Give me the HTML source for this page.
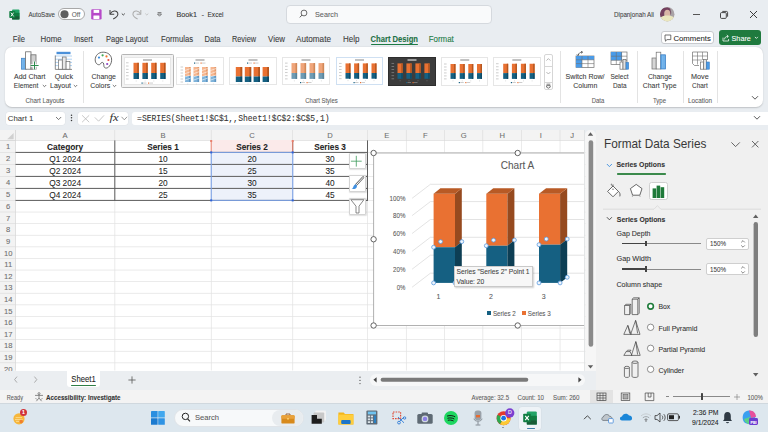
<!DOCTYPE html>
<html><head><meta charset="utf-8"><style>
html,body{margin:0;padding:0;}
body{width:768px;height:432px;overflow:hidden;position:relative;background:#E9EDF1;font-family:'Liberation Sans',sans-serif;}
</style></head><body>
<div style="position:absolute;left:5.00px;top:47.00px;width:758.00px;height:59.50px;background:#FFFFFF;border-radius:7px;box-shadow:0 0.5px 1.5px rgba(0,0,0,0.18);"></div>
<div style="position:absolute;left:5.50px;top:112.00px;width:59.50px;height:12.50px;background:#FFFFFF;border-radius:3px;box-shadow:0 0 0 0.5px #E0E3E8;"></div>
<div style="position:absolute;left:78.00px;top:112.00px;width:50.00px;height:12.50px;background:#FFFFFF;border-radius:3px;box-shadow:0 0 0 0.5px #E0E3E8;"></div>
<div style="position:absolute;left:131.60px;top:112.00px;width:640.00px;height:12.80px;background:#FFFFFF;border-radius:3px;"></div>
<div style="position:absolute;left:0.00px;top:130.00px;width:584.30px;height:240.50px;background:#FFFFFF;border-radius:0px;"></div>
<div style="position:absolute;left:584.80px;top:129.50px;width:11.40px;height:241.00px;background:#F6F6F6;border-radius:0px;border-radius:5px 5px 0 0;"></div>
<div style="position:absolute;left:596.20px;top:130.00px;width:171.80px;height:260.00px;background:#F0F0F0;border-radius:0px;"></div>
<div style="position:absolute;left:0.00px;top:370.50px;width:596.00px;height:19.50px;background:#EBEEF1;border-radius:0px;"></div>
<div style="position:absolute;left:0.00px;top:390.00px;width:768.00px;height:13.00px;background:#F3F3F3;border-radius:0px;"></div>
<div style="position:absolute;left:0.00px;top:403.00px;width:768.00px;height:29.00px;background:#DDE7EE;border-radius:0px;"></div>
<svg style="position:absolute;left:9px;top:9px;overflow:visible;" width="11" height="11" viewBox="0 0 11 11">
<rect x="3" y="0.5" width="7.5" height="10" rx="1" fill="#21A366"/>
<rect x="3" y="3.8" width="7.5" height="3.3" fill="#107C41"/>
<rect x="3" y="7.1" width="7.5" height="3.4" fill="#185C37"/>
<rect x="0.3" y="2" width="6" height="7" rx="0.8" fill="#107C41"/>
<path d="M1.9 3.6 L4.6 7.4 M4.6 3.6 L1.9 7.4" stroke="#fff" stroke-width="0.9"/>
</svg>
<svg style="position:absolute;left:0;top:0" width="768" height="432"><text x="28.50" y="17.05" font-family="Liberation Sans" font-size="7.5" fill="#424242" font-weight="400" text-anchor="start" textLength="26.50" lengthAdjust="spacingAndGlyphs" stroke="#424242" stroke-width="0.08" style="white-space:pre;">AutoSave</text></svg>
<div style="position:absolute;left:58.20px;top:8.10px;width:26.50px;height:12.30px;background:#FFFFFF;border:0.8px solid #A8A8A8;box-sizing:border-box;border-radius:6.2px;"></div>
<svg style="position:absolute;left:58px;top:8px;overflow:visible;" width="26" height="12" viewBox="0 0 26 12"><circle cx="6.5" cy="6.2" r="4.05" fill="#5F5F5F"/></svg>
<svg style="position:absolute;left:0;top:0" width="768" height="432"><text x="71.80" y="16.88" font-family="Liberation Sans" font-size="7" fill="#5F5F5F" font-weight="400" text-anchor="start" textLength="8.50" lengthAdjust="spacingAndGlyphs" stroke="#5F5F5F" stroke-width="0.08" style="white-space:pre;">Off</text></svg>
<svg style="position:absolute;left:91px;top:8.8px;overflow:visible;" width="11" height="11" viewBox="0 0 11 11">
<rect x="0.2" y="0.2" width="10.4" height="10.4" rx="1.3" fill="#B749C9"/>
<rect x="2.6" y="0.9" width="5.6" height="3" fill="#fff"/>
<rect x="2.4" y="6.4" width="6" height="3.6" rx="0.4" fill="#fff"/>
</svg>
<svg style="position:absolute;left:108px;top:8px;overflow:visible;" width="20" height="12" viewBox="0 0 20 12">
<path d="M2 2 V6.2 H6.2" fill="none" stroke="#424242" stroke-width="1.05" stroke-linejoin="round"/>
<path d="M2.2 6 C4 2.6 8.6 2 9.7 5 C10.4 7.2 8.2 9.6 5.2 10.9" fill="none" stroke="#424242" stroke-width="1.05"/>
<path d="M13.8 5.6 L15.3 7 L16.8 5.6" fill="none" stroke="#424242" stroke-width="0.95"/>
</svg>
<svg style="position:absolute;left:131px;top:8px;overflow:visible;" width="20" height="12" viewBox="0 0 20 12">
<path d="M9.8 2 V6.2 H5.6" fill="none" stroke="#ADADAD" stroke-width="1.05" stroke-linejoin="round"/>
<path d="M9.6 6 C7.8 2.6 3.2 2 2.1 5 C1.4 7.2 3.6 9.6 6.6 10.9" fill="none" stroke="#ADADAD" stroke-width="1.05"/>
<path d="M14.3 5.6 L15.8 7 L17.3 5.6" fill="none" stroke="#C0C0C0" stroke-width="0.9"/>
</svg>
<svg style="position:absolute;left:156px;top:11px;overflow:visible;" width="7" height="6" viewBox="0 0 7 6">
<path d="M1.6 1.6 H5.4" stroke="#555" stroke-width="0.75"/>
<path d="M1.5 3 H5.5 L3.5 5.2 Z" fill="none" stroke="#555" stroke-width="0.75" stroke-linejoin="round"/>
</svg>
<svg style="position:absolute;left:0;top:0" width="768" height="432"><text x="176.50" y="17.15" font-family="Liberation Sans" font-size="7.8" fill="#333333" font-weight="400" text-anchor="start" textLength="20.50" lengthAdjust="spacingAndGlyphs" stroke="#333333" stroke-width="0.08" style="white-space:pre;">Book1</text><text x="201.50" y="17.15" font-family="Liberation Sans" font-size="7.8" fill="#333333" font-weight="400" text-anchor="start" stroke="#333333" stroke-width="0.08" style="white-space:pre;">-</text><text x="207.50" y="17.15" font-family="Liberation Sans" font-size="7.8" fill="#333333" font-weight="400" text-anchor="start" textLength="16.00" lengthAdjust="spacingAndGlyphs" stroke="#333333" stroke-width="0.08" style="white-space:pre;">Excel</text></svg>
<div style="position:absolute;left:286.00px;top:4.50px;width:206.00px;height:19.30px;background:#F9FAFB;border:0.6px solid #D5D9DE;box-sizing:border-box;border-radius:4px;"></div>
<svg style="position:absolute;left:299px;top:9px;overflow:visible;" width="9" height="10" viewBox="0 0 9 10">
<circle cx="5" cy="4" r="2.9" fill="none" stroke="#5A5A5A" stroke-width="0.9"/>
<path d="M2.9 6.1 L0.8 8.4" stroke="#5A5A5A" stroke-width="1"/>
</svg>
<svg style="position:absolute;left:0;top:0" width="768" height="432"><text x="315.00" y="17.08" font-family="Liberation Sans" font-size="7.6" fill="#616161" font-weight="400" text-anchor="start" textLength="23.00" lengthAdjust="spacingAndGlyphs" stroke="#616161" stroke-width="0.08" style="white-space:pre;">Search</text><text x="614.00" y="17.20" font-family="Liberation Sans" font-size="7.4" fill="#424242" font-weight="400" text-anchor="start" textLength="40.00" lengthAdjust="spacingAndGlyphs" stroke="#424242" stroke-width="0.08" style="white-space:pre;">Dipanjonah Ali</text></svg>
<svg style="position:absolute;left:659.8px;top:7px;overflow:visible;" width="15" height="15" viewBox="0 0 15 15">
<defs><clipPath id="av"><circle cx="7.25" cy="7.2" r="7.2"/></clipPath></defs>
<g clip-path="url(#av)">
<rect width="15" height="15" fill="#A9A3A6"/>
<path d="M0 5 C1 2 3.5 0.6 6.5 0.6 C8.5 0.6 10 1.2 10.5 2.5 L9.8 5 C8.5 3 6 3 4.6 4.6 L4.2 9.5 L0 10.5 Z" fill="#74405E"/><path d="M9.8 2.4 C11 3 11.5 5 11 7.5 L9.6 7.6 Z" fill="#7B5A6C"/>
<ellipse cx="7.3" cy="6.6" rx="2.9" ry="3.8" fill="#D9B5A6"/>
<path d="M0 15 L0 11 C2 9 4.5 8.6 7.2 8.6 C10 8.6 12.5 9 15 11 L15 15 Z" fill="#EAE6BE"/>
</g></svg>
<div style="position:absolute;left:693.00px;top:13.90px;width:6.50px;height:0.80px;background:#555555;border-radius:0px;"></div>
<svg style="position:absolute;left:719px;top:10px;overflow:visible;" width="11" height="10" viewBox="0 0 11 10">
<rect x="1.5" y="2.6" width="5.8" height="5.8" rx="1" fill="none" stroke="#333" stroke-width="0.9"/>
<path d="M3.3 1.4 H7.4 Q8.6 1.4 8.6 2.6 V6.7" fill="none" stroke="#333" stroke-width="0.9"/>
</svg>
<svg style="position:absolute;left:749px;top:10px;overflow:visible;" width="10" height="10" viewBox="0 0 10 10"><path d="M1 1 L8 8 M8 1 L1 8" stroke="#333" stroke-width="0.95"/></svg>
<svg style="position:absolute;left:0;top:0" width="768" height="432"><text x="12.75" y="41.61" font-family="Liberation Sans" font-size="8.4" fill="#3B3B3B" font-weight="400" text-anchor="start" textLength="12.25" lengthAdjust="spacingAndGlyphs" stroke="#3B3B3B" stroke-width="0.08" style="white-space:pre;">File</text><text x="40.60" y="41.61" font-family="Liberation Sans" font-size="8.4" fill="#3B3B3B" font-weight="400" text-anchor="start" textLength="21.00" lengthAdjust="spacingAndGlyphs" stroke="#3B3B3B" stroke-width="0.08" style="white-space:pre;">Home</text><text x="74.00" y="41.61" font-family="Liberation Sans" font-size="8.4" fill="#3B3B3B" font-weight="400" text-anchor="start" textLength="18.75" lengthAdjust="spacingAndGlyphs" stroke="#3B3B3B" stroke-width="0.08" style="white-space:pre;">Insert</text><text x="106.00" y="41.61" font-family="Liberation Sans" font-size="8.4" fill="#3B3B3B" font-weight="400" text-anchor="start" textLength="42.00" lengthAdjust="spacingAndGlyphs" stroke="#3B3B3B" stroke-width="0.08" style="white-space:pre;">Page Layout</text><text x="161.00" y="41.61" font-family="Liberation Sans" font-size="8.4" fill="#3B3B3B" font-weight="400" text-anchor="start" textLength="32.00" lengthAdjust="spacingAndGlyphs" stroke="#3B3B3B" stroke-width="0.08" style="white-space:pre;">Formulas</text><text x="204.50" y="41.61" font-family="Liberation Sans" font-size="8.4" fill="#3B3B3B" font-weight="400" text-anchor="start" textLength="16.00" lengthAdjust="spacingAndGlyphs" stroke="#3B3B3B" stroke-width="0.08" style="white-space:pre;">Data</text><text x="232.00" y="41.61" font-family="Liberation Sans" font-size="8.4" fill="#3B3B3B" font-weight="400" text-anchor="start" textLength="24.00" lengthAdjust="spacingAndGlyphs" stroke="#3B3B3B" stroke-width="0.08" style="white-space:pre;">Review</text><text x="268.00" y="41.61" font-family="Liberation Sans" font-size="8.4" fill="#3B3B3B" font-weight="400" text-anchor="start" textLength="17.00" lengthAdjust="spacingAndGlyphs" stroke="#3B3B3B" stroke-width="0.08" style="white-space:pre;">View</text><text x="296.00" y="41.61" font-family="Liberation Sans" font-size="8.4" fill="#3B3B3B" font-weight="400" text-anchor="start" textLength="35.00" lengthAdjust="spacingAndGlyphs" stroke="#3B3B3B" stroke-width="0.08" style="white-space:pre;">Automate</text><text x="343.00" y="41.61" font-family="Liberation Sans" font-size="8.4" fill="#3B3B3B" font-weight="400" text-anchor="start" textLength="16.50" lengthAdjust="spacingAndGlyphs" stroke="#3B3B3B" stroke-width="0.08" style="white-space:pre;">Help</text><text x="370.50" y="41.61" font-family="Liberation Sans" font-size="8.4" fill="#1E7145" font-weight="700" text-anchor="start" textLength="47.50" lengthAdjust="spacingAndGlyphs" stroke="#1E7145" stroke-width="0.08" style="white-space:pre;">Chart Design</text></svg>
<div style="position:absolute;left:370.50px;top:43.80px;width:47.50px;height:1.50px;background:#1E7B45;border-radius:1px;"></div>
<svg style="position:absolute;left:0;top:0" width="768" height="432"><text x="428.75" y="41.61" font-family="Liberation Sans" font-size="8.4" fill="#217A45" font-weight="400" text-anchor="start" textLength="25.00" lengthAdjust="spacingAndGlyphs" stroke="#217A45" stroke-width="0.08" style="white-space:pre;">Format</text></svg>
<div style="position:absolute;left:661.20px;top:30.50px;width:52.90px;height:13.70px;background:#FFFFFF;border:0.7px solid #C8CACE;box-sizing:border-box;border-radius:3px;"></div>
<svg style="position:absolute;left:663.5px;top:33.5px;overflow:visible;" width="8" height="8" viewBox="0 0 8 8"><path d="M1 1 H6.8 V5.6 H3 L1.4 7.2 V5.6 H1 Z" fill="none" stroke="#444" stroke-width="0.75" stroke-linejoin="round"/></svg>
<svg style="position:absolute;left:0;top:0" width="768" height="432"><text x="673.40" y="40.80" font-family="Liberation Sans" font-size="8.1" fill="#2A2A2A" font-weight="400" text-anchor="start" textLength="37.50" lengthAdjust="spacingAndGlyphs" stroke="#2A2A2A" stroke-width="0.08" style="white-space:pre;">Comments</text></svg>
<div style="position:absolute;left:719.30px;top:30.40px;width:41.60px;height:14.20px;background:#1F7A3E;border-radius:3px;"></div>
<svg style="position:absolute;left:721.5px;top:33.5px;overflow:visible;" width="8" height="8" viewBox="0 0 8 8"><path d="M1 3.6 V7 H6.6 V5" fill="none" stroke="#fff" stroke-width="0.75"/>
<path d="M2.6 5.4 C2.6 3.2 4 2.4 6 2.4 M4.8 0.9 L6.4 2.4 L4.8 3.9" fill="none" stroke="#fff" stroke-width="0.75"/></svg>
<svg style="position:absolute;left:0;top:0" width="768" height="432"><text x="731.50" y="40.80" font-family="Liberation Sans" font-size="8.1" fill="#FFFFFF" font-weight="400" text-anchor="start" textLength="19.40" lengthAdjust="spacingAndGlyphs" stroke="#FFFFFF" stroke-width="0.08" style="white-space:pre;">Share</text></svg>
<svg style="position:absolute;left:754.2px;top:36.4px;overflow:visible;" width="5" height="4" viewBox="0 0 5 4"><path d="M0.9 0.9 L2.4 2.4 L3.9 0.9" fill="none" stroke="#fff" stroke-width="0.8"/></svg>
<svg style="position:absolute;left:20px;top:51px;overflow:visible;" width="20" height="19" viewBox="0 0 20 19">
<rect x="1.3" y="7.2" width="5" height="11" fill="#5FA8E8" stroke="#3A7CC0" stroke-width="0.6"/>
<path d="M2.6 8 V17.6 M4 8 V17.6" stroke="#9BC9F1" stroke-width="0.5"/>
<rect x="5.6" y="0.8" width="5.4" height="17.4" fill="#FFFFFF" stroke="#6E6E6E" stroke-width="0.8"/>
<rect x="11" y="3.8" width="5" height="14.4" fill="#D0D0D0" stroke="#6E6E6E" stroke-width="0.8"/>
<path d="M14.5 10.5 V18.4 M10.6 14.5 H18.6" stroke="#FFFFFF" stroke-width="2.6"/>
<path d="M14.5 10.5 V18.4 M10.6 14.5 H18.6" stroke="#2E8B4E" stroke-width="1"/>
</svg>
<svg style="position:absolute;left:0;top:0" width="768" height="432"><text x="14.00" y="79.02" font-family="Liberation Sans" font-size="8.0" fill="#3B3B3B" font-weight="400" text-anchor="start" textLength="31.50" lengthAdjust="spacingAndGlyphs" stroke="#3B3B3B" stroke-width="0.08" style="white-space:pre;">Add Chart</text><text x="13.80" y="88.42" font-family="Liberation Sans" font-size="8.0" fill="#3B3B3B" font-weight="400" text-anchor="start" textLength="24.50" lengthAdjust="spacingAndGlyphs" stroke="#3B3B3B" stroke-width="0.08" style="white-space:pre;">Element</text></svg>
<svg style="position:absolute;left:41.5px;top:84.10000000000001px;overflow:visible;" width="5" height="4" viewBox="0 0 5 4"><path d="M0.8 1 L2.5 2.7 L4.2 1" fill="none" stroke="#555" stroke-width="0.8"/></svg>
<svg style="position:absolute;left:54px;top:51px;overflow:visible;" width="19" height="19" viewBox="0 0 19 19">
<rect x="2.5" y="0.8" width="14" height="2.4" fill="#4A90D9"/>
<path d="M1 5 H18 M1 8.2 H18 M1 11.4 H18 M1 14.6 H18" stroke="#8FC0EE" stroke-width="0.7"/>
<path d="M1.3 4.5 V18.4 H18" fill="none" stroke="#6E6E6E" stroke-width="0.8"/>
<rect x="4.5" y="9" width="3.8" height="9.2" fill="#FFFFFF" stroke="#6E6E6E" stroke-width="0.7"/>
<rect x="8.3" y="6" width="3.8" height="12.2" fill="#E8E8E8" stroke="#6E6E6E" stroke-width="0.7"/>
<rect x="12.1" y="10.5" width="3.8" height="7.7" fill="#FFFFFF" stroke="#6E6E6E" stroke-width="0.7"/>
</svg>
<svg style="position:absolute;left:0;top:0" width="768" height="432"><text x="54.70" y="79.02" font-family="Liberation Sans" font-size="8.0" fill="#3B3B3B" font-weight="400" text-anchor="start" textLength="18.30" lengthAdjust="spacingAndGlyphs" stroke="#3B3B3B" stroke-width="0.08" style="white-space:pre;">Quick</text><text x="50.00" y="88.42" font-family="Liberation Sans" font-size="8.0" fill="#3B3B3B" font-weight="400" text-anchor="start" textLength="21.00" lengthAdjust="spacingAndGlyphs" stroke="#3B3B3B" stroke-width="0.08" style="white-space:pre;">Layout</text></svg>
<svg style="position:absolute;left:72.5px;top:84.10000000000001px;overflow:visible;" width="5" height="4" viewBox="0 0 5 4"><path d="M0.8 1 L2.5 2.7 L4.2 1" fill="none" stroke="#555" stroke-width="0.8"/></svg>
<svg style="position:absolute;left:0;top:0" width="768" height="432"><text x="45.00" y="102.81" font-family="Liberation Sans" font-size="6.8" fill="#5E5E5E" font-weight="400" text-anchor="middle" textLength="39.00" lengthAdjust="spacingAndGlyphs" stroke="#5E5E5E" stroke-width="0.08" style="white-space:pre;">Chart Layouts</text></svg>
<div style="position:absolute;left:83.40px;top:51.00px;width:0.80px;height:52.00px;background:#E3E3E3;border-radius:0px;"></div>
<svg style="position:absolute;left:94px;top:51px;overflow:visible;" width="19" height="19" viewBox="0 0 19 19">
<path d="M9.2 1.2 C4.2 1.2 1.2 4.8 1.2 8.8 C1.2 12.6 4 14.2 5.6 13.6 C7.2 13 6.8 11.2 8.4 11.4 C10.2 11.6 9.6 14.4 10 15.6 C10.6 17.6 13.4 17.6 15.2 15.4 C17.2 13 17.8 10.2 17.6 8 C17.2 4 13.8 1.2 9.2 1.2 Z" fill="#fff" stroke="#505050" stroke-width="0.85"/>
<circle cx="5" cy="6.6" r="1.1" fill="#3D8FE0"/>
<circle cx="8.6" cy="4.3" r="1.1" fill="#3DAA55"/>
<circle cx="12.5" cy="5.4" r="1.1" fill="#F07A2A"/>
<circle cx="14.4" cy="9" r="1.1" fill="#E84B3C"/>
<circle cx="13.2" cy="13" r="1.1" fill="#8E44C0"/>
</svg>
<svg style="position:absolute;left:0;top:0" width="768" height="432"><text x="91.50" y="79.02" font-family="Liberation Sans" font-size="8.0" fill="#3B3B3B" font-weight="400" text-anchor="start" textLength="24.40" lengthAdjust="spacingAndGlyphs" stroke="#3B3B3B" stroke-width="0.08" style="white-space:pre;">Change</text><text x="90.20" y="88.42" font-family="Liberation Sans" font-size="8.0" fill="#3B3B3B" font-weight="400" text-anchor="start" textLength="20.00" lengthAdjust="spacingAndGlyphs" stroke="#3B3B3B" stroke-width="0.08" style="white-space:pre;">Colors</text></svg>
<svg style="position:absolute;left:111.5px;top:84.10000000000001px;overflow:visible;" width="5" height="4" viewBox="0 0 5 4"><path d="M0.8 1 L2.5 2.7 L4.2 1" fill="none" stroke="#555" stroke-width="0.8"/></svg>
<div style="position:absolute;left:121.20px;top:54.40px;width:52.50px;height:34.00px;background:#F3F3F3;border:1px solid #B5B5B5;box-sizing:border-box;border-radius:1.5px;"></div>
<div style="position:absolute;left:124.00px;top:57.00px;width:47.00px;height:28.00px;background:#FFFFFF;border:0.6px solid #E6E6E6;box-sizing:border-box;border-radius:0px;"></div>
<svg style="position:absolute;left:124px;top:57px;overflow:visible;" width="47" height="28" viewBox="0 0 47 28"><rect x="19.0" y="2.4" width="9" height="1.2" fill="#9A9A9A"/><rect x="2" y="5.35" width="2.6" height="0.9" fill="#C8C8C8"/><rect x="2" y="8.59" width="2.6" height="0.9" fill="#C8C8C8"/><rect x="2" y="11.83" width="2.6" height="0.9" fill="#C8C8C8"/><rect x="2" y="15.07" width="2.6" height="0.9" fill="#C8C8C8"/><rect x="2" y="18.31" width="2.6" height="0.9" fill="#C8C8C8"/><rect x="2" y="21.55" width="2.6" height="0.9" fill="#C8C8C8"/><rect x="9.5" y="5.8" width="5.3" height="10.2" fill="#E97132"/><rect x="9.5" y="16" width="5.3" height="6" fill="#156082"/><rect x="13.315999999999999" y="5.8" width="1.484" height="10.2" fill="#B4561F"/><rect x="13.315999999999999" y="16" width="1.484" height="6" fill="#0E4A66"/><rect x="11.75" y="23.6" width="0.8" height="0.8" fill="#C8C8C8"/><rect x="18.4" y="5.8" width="5.3" height="10.2" fill="#E97132"/><rect x="18.4" y="16" width="5.3" height="6" fill="#156082"/><rect x="22.215999999999998" y="5.8" width="1.484" height="10.2" fill="#B4561F"/><rect x="22.215999999999998" y="16" width="1.484" height="6" fill="#0E4A66"/><rect x="20.65" y="23.6" width="0.8" height="0.8" fill="#C8C8C8"/><rect x="27.2" y="5.8" width="5.3" height="10.2" fill="#E97132"/><rect x="27.2" y="16" width="5.3" height="6" fill="#156082"/><rect x="31.016" y="5.8" width="1.484" height="10.2" fill="#B4561F"/><rect x="31.016" y="16" width="1.484" height="6" fill="#0E4A66"/><rect x="29.45" y="23.6" width="0.8" height="0.8" fill="#C8C8C8"/><rect x="36.2" y="5.8" width="5.3" height="10.2" fill="#E97132"/><rect x="36.2" y="16" width="5.3" height="6" fill="#156082"/><rect x="40.016000000000005" y="5.8" width="1.484" height="10.2" fill="#B4561F"/><rect x="40.016000000000005" y="16" width="1.484" height="6" fill="#0E4A66"/><rect x="38.45" y="23.6" width="0.8" height="0.8" fill="#C8C8C8"/><rect x="17.5" y="25.5" width="1.2" height="1.2" fill="#156082"/><rect x="19.0" y="25.6" width="3.5" height="0.9" fill="#C8C8C8"/><rect x="24.0" y="25.5" width="1.2" height="1.2" fill="#E97132"/><rect x="25.5" y="25.6" width="3.5" height="0.9" fill="#C8C8C8"/></svg>
<div style="position:absolute;left:176.30px;top:57.00px;width:48.00px;height:28.00px;background:#FFFFFF;border:0.6px solid #E6E6E6;box-sizing:border-box;border-radius:0px;"></div>
<svg style="position:absolute;left:176.3px;top:57px;overflow:visible;" width="48" height="28" viewBox="0 0 48 28"><rect x="19.5" y="2.4" width="9" height="1.2" fill="#9A9A9A"/><rect x="4.5" y="9.55" width="2.6" height="0.9" fill="#C8C8C8"/><rect x="4.5" y="12.55" width="2.6" height="0.9" fill="#C8C8C8"/><rect x="4.5" y="15.55" width="2.6" height="0.9" fill="#C8C8C8"/><rect x="4.5" y="18.55" width="2.6" height="0.9" fill="#C8C8C8"/><rect x="4.5" y="21.55" width="2.6" height="0.9" fill="#C8C8C8"/><rect x="4.5" y="24.55" width="2.6" height="0.9" fill="#C8C8C8"/><rect x="9" y="10" width="5.6" height="9" fill="#F6B68F"/><rect x="9" y="19" width="5.6" height="6" fill="#7FB3DA"/><rect x="13.032" y="10" width="1.568" height="9" fill="#E39A6E"/><rect x="13.032" y="19" width="1.568" height="6" fill="#5E95C2"/><path d="M9 13.5 L14.6 11.5" stroke="#FFF" stroke-width="0.7" opacity="0.8"/><path d="M9 16.7 L14.6 14.7" stroke="#FFF" stroke-width="0.7" opacity="0.8"/><path d="M9 19.9 L14.6 17.9" stroke="#FFF" stroke-width="0.7" opacity="0.8"/><path d="M9 23.1 L14.6 21.1" stroke="#FFF" stroke-width="0.7" opacity="0.8"/><rect x="11.4" y="26.6" width="0.8" height="0.8" fill="#C8C8C8"/><rect x="17.5" y="10" width="5.6" height="9" fill="#F6B68F"/><rect x="17.5" y="19" width="5.6" height="6" fill="#7FB3DA"/><rect x="21.532" y="10" width="1.568" height="9" fill="#E39A6E"/><rect x="21.532" y="19" width="1.568" height="6" fill="#5E95C2"/><path d="M17.5 13.5 L23.1 11.5" stroke="#FFF" stroke-width="0.7" opacity="0.8"/><path d="M17.5 16.7 L23.1 14.7" stroke="#FFF" stroke-width="0.7" opacity="0.8"/><path d="M17.5 19.9 L23.1 17.9" stroke="#FFF" stroke-width="0.7" opacity="0.8"/><path d="M17.5 23.1 L23.1 21.1" stroke="#FFF" stroke-width="0.7" opacity="0.8"/><rect x="19.900000000000002" y="26.6" width="0.8" height="0.8" fill="#C8C8C8"/><rect x="26" y="10" width="5.6" height="9" fill="#F6B68F"/><rect x="26" y="19" width="5.6" height="6" fill="#7FB3DA"/><rect x="30.032" y="10" width="1.568" height="9" fill="#E39A6E"/><rect x="30.032" y="19" width="1.568" height="6" fill="#5E95C2"/><path d="M26 13.5 L31.6 11.5" stroke="#FFF" stroke-width="0.7" opacity="0.8"/><path d="M26 16.7 L31.6 14.7" stroke="#FFF" stroke-width="0.7" opacity="0.8"/><path d="M26 19.9 L31.6 17.9" stroke="#FFF" stroke-width="0.7" opacity="0.8"/><path d="M26 23.1 L31.6 21.1" stroke="#FFF" stroke-width="0.7" opacity="0.8"/><rect x="28.400000000000002" y="26.6" width="0.8" height="0.8" fill="#C8C8C8"/><rect x="34.5" y="10" width="5.6" height="9" fill="#F6B68F"/><rect x="34.5" y="19" width="5.6" height="6" fill="#7FB3DA"/><rect x="38.532" y="10" width="1.568" height="9" fill="#E39A6E"/><rect x="38.532" y="19" width="1.568" height="6" fill="#5E95C2"/><path d="M34.5 13.5 L40.1 11.5" stroke="#FFF" stroke-width="0.7" opacity="0.8"/><path d="M34.5 16.7 L40.1 14.7" stroke="#FFF" stroke-width="0.7" opacity="0.8"/><path d="M34.5 19.9 L40.1 17.9" stroke="#FFF" stroke-width="0.7" opacity="0.8"/><path d="M34.5 23.1 L40.1 21.1" stroke="#FFF" stroke-width="0.7" opacity="0.8"/><rect x="36.9" y="26.6" width="0.8" height="0.8" fill="#C8C8C8"/><rect x="18.0" y="5.5" width="1.2" height="1.2" fill="#156082"/><rect x="19.5" y="5.6" width="3.5" height="0.9" fill="#C8C8C8"/><rect x="24.5" y="5.5" width="1.2" height="1.2" fill="#E97132"/><rect x="26.0" y="5.6" width="3.5" height="0.9" fill="#C8C8C8"/></svg>
<div style="position:absolute;left:229.20px;top:57.00px;width:48.00px;height:28.00px;background:#FFFFFF;border:0.6px solid #E6E6E6;box-sizing:border-box;border-radius:0px;"></div>
<svg style="position:absolute;left:229.2px;top:57px;overflow:visible;" width="48" height="28" viewBox="0 0 48 28"><rect x="19.5" y="2.4" width="9" height="1.2" fill="#9A9A9A"/><rect x="6.8" y="10" width="6.4" height="9.5" fill="#E97132"/><rect x="6.8" y="19.5" width="6.4" height="5.5" fill="#156082"/><rect x="11.408" y="10" width="1.7920000000000003" height="9.5" fill="#B4561F"/><rect x="11.408" y="19.5" width="1.7920000000000003" height="5.5" fill="#0E4A66"/><rect x="9.6" y="26.6" width="0.8" height="0.8" fill="#C8C8C8"/><rect x="15.8" y="10" width="6.4" height="9.5" fill="#E97132"/><rect x="15.8" y="19.5" width="6.4" height="5.5" fill="#156082"/><rect x="20.408" y="10" width="1.7920000000000003" height="9.5" fill="#B4561F"/><rect x="20.408" y="19.5" width="1.7920000000000003" height="5.5" fill="#0E4A66"/><rect x="18.6" y="26.6" width="0.8" height="0.8" fill="#C8C8C8"/><rect x="24.6" y="10" width="6.4" height="9.5" fill="#E97132"/><rect x="24.6" y="19.5" width="6.4" height="5.5" fill="#156082"/><rect x="29.208000000000002" y="10" width="1.7920000000000003" height="9.5" fill="#B4561F"/><rect x="29.208000000000002" y="19.5" width="1.7920000000000003" height="5.5" fill="#0E4A66"/><rect x="27.400000000000002" y="26.6" width="0.8" height="0.8" fill="#C8C8C8"/><rect x="33.6" y="10" width="6.4" height="9.5" fill="#E97132"/><rect x="33.6" y="19.5" width="6.4" height="5.5" fill="#156082"/><rect x="38.208" y="10" width="1.7920000000000003" height="9.5" fill="#B4561F"/><rect x="38.208" y="19.5" width="1.7920000000000003" height="5.5" fill="#0E4A66"/><rect x="36.400000000000006" y="26.6" width="0.8" height="0.8" fill="#C8C8C8"/><rect x="18.0" y="5.5" width="1.2" height="1.2" fill="#156082"/><rect x="19.5" y="5.6" width="3.5" height="0.9" fill="#C8C8C8"/><rect x="24.5" y="5.5" width="1.2" height="1.2" fill="#E97132"/><rect x="26.0" y="5.6" width="3.5" height="0.9" fill="#C8C8C8"/></svg>
<div style="position:absolute;left:282.10px;top:57.00px;width:48.00px;height:28.00px;background:#FFFFFF;border:0.6px solid #E6E6E6;box-sizing:border-box;border-radius:0px;"></div>
<svg style="position:absolute;left:282.1px;top:57px;overflow:visible;" width="48" height="28" viewBox="0 0 48 28"><rect x="19.5" y="2.4" width="9" height="1.2" fill="#9A9A9A"/><rect x="3" y="5.65" width="2.6" height="0.9" fill="#C8C8C8"/><rect x="3" y="8.81" width="2.6" height="0.9" fill="#C8C8C8"/><rect x="3" y="11.97" width="2.6" height="0.9" fill="#C8C8C8"/><rect x="3" y="15.13" width="2.6" height="0.9" fill="#C8C8C8"/><rect x="3" y="18.29" width="2.6" height="0.9" fill="#C8C8C8"/><rect x="3" y="21.45" width="2.6" height="0.9" fill="#C8C8C8"/><rect x="9.5" y="6.1" width="5.6" height="9.9" fill="#F0A57A"/><rect x="9.5" y="16" width="5.6" height="5.899999999999999" fill="#6E9BB4"/><rect x="13.532" y="6.1" width="1.568" height="9.9" fill="#D08858"/><rect x="13.532" y="16" width="1.568" height="5.899999999999999" fill="#5A8398"/><rect x="11.9" y="23.5" width="0.8" height="0.8" fill="#C8C8C8"/><rect x="18.5" y="6.1" width="5.6" height="9.9" fill="#F0A57A"/><rect x="18.5" y="16" width="5.6" height="5.899999999999999" fill="#6E9BB4"/><rect x="22.532" y="6.1" width="1.568" height="9.9" fill="#D08858"/><rect x="22.532" y="16" width="1.568" height="5.899999999999999" fill="#5A8398"/><rect x="20.900000000000002" y="23.5" width="0.8" height="0.8" fill="#C8C8C8"/><rect x="27.5" y="6.1" width="5.6" height="9.9" fill="#F0A57A"/><rect x="27.5" y="16" width="5.6" height="5.899999999999999" fill="#6E9BB4"/><rect x="31.532" y="6.1" width="1.568" height="9.9" fill="#D08858"/><rect x="31.532" y="16" width="1.568" height="5.899999999999999" fill="#5A8398"/><rect x="29.900000000000002" y="23.5" width="0.8" height="0.8" fill="#C8C8C8"/><rect x="36.5" y="6.1" width="5.6" height="9.9" fill="#F0A57A"/><rect x="36.5" y="16" width="5.6" height="5.899999999999999" fill="#6E9BB4"/><rect x="40.532" y="6.1" width="1.568" height="9.9" fill="#D08858"/><rect x="40.532" y="16" width="1.568" height="5.899999999999999" fill="#5A8398"/><rect x="38.9" y="23.5" width="0.8" height="0.8" fill="#C8C8C8"/><rect x="18.0" y="25" width="1.2" height="1.2" fill="#156082"/><rect x="19.5" y="25.1" width="3.5" height="0.9" fill="#C8C8C8"/><rect x="24.5" y="25" width="1.2" height="1.2" fill="#E97132"/><rect x="26.0" y="25.1" width="3.5" height="0.9" fill="#C8C8C8"/></svg>
<div style="position:absolute;left:335.50px;top:57.00px;width:47.00px;height:28.00px;background:#FFFFFF;border:0.6px solid #CFE0F2;box-sizing:border-box;border-radius:0px;"></div>
<svg style="position:absolute;left:335.5px;top:57px;overflow:visible;" width="47" height="28" viewBox="0 0 47 28"><rect x="19.0" y="2.4" width="9" height="1.2" fill="#9A9A9A"/><rect x="3" y="5.95" width="2.6" height="0.9" fill="#C8C8C8"/><rect x="3" y="9.01" width="2.6" height="0.9" fill="#C8C8C8"/><rect x="3" y="12.07" width="2.6" height="0.9" fill="#C8C8C8"/><rect x="3" y="15.13" width="2.6" height="0.9" fill="#C8C8C8"/><rect x="3" y="18.19" width="2.6" height="0.9" fill="#C8C8C8"/><rect x="3" y="21.25" width="2.6" height="0.9" fill="#C8C8C8"/><rect x="9.5" y="6.4" width="5" height="9.6" fill="#E97132"/><rect x="9.5" y="16" width="5" height="5.699999999999999" fill="#156082"/><rect x="13.1" y="6.4" width="1.4000000000000001" height="9.6" fill="#B4561F"/><rect x="13.1" y="16" width="1.4000000000000001" height="5.699999999999999" fill="#0E4A66"/><rect x="11.6" y="23.3" width="0.8" height="0.8" fill="#C8C8C8"/><rect x="18.1" y="6.4" width="5" height="9.6" fill="#E97132"/><rect x="18.1" y="16" width="5" height="5.699999999999999" fill="#156082"/><rect x="21.700000000000003" y="6.4" width="1.4000000000000001" height="9.6" fill="#B4561F"/><rect x="21.700000000000003" y="16" width="1.4000000000000001" height="5.699999999999999" fill="#0E4A66"/><rect x="20.200000000000003" y="23.3" width="0.8" height="0.8" fill="#C8C8C8"/><rect x="26.8" y="6.4" width="5" height="9.6" fill="#E97132"/><rect x="26.8" y="16" width="5" height="5.699999999999999" fill="#156082"/><rect x="30.4" y="6.4" width="1.4000000000000001" height="9.6" fill="#B4561F"/><rect x="30.4" y="16" width="1.4000000000000001" height="5.699999999999999" fill="#0E4A66"/><rect x="28.900000000000002" y="23.3" width="0.8" height="0.8" fill="#C8C8C8"/><rect x="35.5" y="6.4" width="5" height="9.6" fill="#E97132"/><rect x="35.5" y="16" width="5" height="5.699999999999999" fill="#156082"/><rect x="39.1" y="6.4" width="1.4000000000000001" height="9.6" fill="#B4561F"/><rect x="39.1" y="16" width="1.4000000000000001" height="5.699999999999999" fill="#0E4A66"/><rect x="37.6" y="23.3" width="0.8" height="0.8" fill="#C8C8C8"/><rect x="17.5" y="25" width="1.2" height="1.2" fill="#156082"/><rect x="19.0" y="25.1" width="3.5" height="0.9" fill="#C8C8C8"/><rect x="24.0" y="25" width="1.2" height="1.2" fill="#E97132"/><rect x="25.5" y="25.1" width="3.5" height="0.9" fill="#C8C8C8"/></svg>
<div style="position:absolute;left:387.70px;top:57.00px;width:48.00px;height:28.60px;background:#3C3C3C;border:0.6px solid #2E2E2E;box-sizing:border-box;border-radius:0px;"></div>
<svg style="position:absolute;left:387.7px;top:57px;overflow:visible;" width="48" height="28.6" viewBox="0 0 48 28.6"><rect x="19.5" y="2.4" width="9" height="1.2" fill="#DDD"/><rect x="3.5" y="5.95" width="2.6" height="0.9" fill="#7A7A7A"/><rect x="3.5" y="9.03" width="2.6" height="0.9" fill="#7A7A7A"/><rect x="3.5" y="12.11" width="2.6" height="0.9" fill="#7A7A7A"/><rect x="3.5" y="15.19" width="2.6" height="0.9" fill="#7A7A7A"/><rect x="3.5" y="18.27" width="2.6" height="0.9" fill="#7A7A7A"/><rect x="3.5" y="21.35" width="2.6" height="0.9" fill="#7A7A7A"/><rect x="9.5" y="6.4" width="5.2" height="9.700000000000001" fill="#E97132"/><rect x="9.5" y="16.1" width="5.2" height="5.699999999999999" fill="#156082"/><rect x="13.244" y="6.4" width="1.4560000000000002" height="9.700000000000001" fill="#B4561F"/><rect x="13.244" y="16.1" width="1.4560000000000002" height="5.699999999999999" fill="#0E4A66"/><rect x="11.7" y="23.400000000000002" width="0.8" height="0.8" fill="#7A7A7A"/><rect x="18.4" y="6.4" width="5.2" height="9.700000000000001" fill="#E97132"/><rect x="18.4" y="16.1" width="5.2" height="5.699999999999999" fill="#156082"/><rect x="22.144" y="6.4" width="1.4560000000000002" height="9.700000000000001" fill="#B4561F"/><rect x="22.144" y="16.1" width="1.4560000000000002" height="5.699999999999999" fill="#0E4A66"/><rect x="20.6" y="23.400000000000002" width="0.8" height="0.8" fill="#7A7A7A"/><rect x="27.4" y="6.4" width="5.2" height="9.700000000000001" fill="#E97132"/><rect x="27.4" y="16.1" width="5.2" height="5.699999999999999" fill="#156082"/><rect x="31.144" y="6.4" width="1.4560000000000002" height="9.700000000000001" fill="#B4561F"/><rect x="31.144" y="16.1" width="1.4560000000000002" height="5.699999999999999" fill="#0E4A66"/><rect x="29.6" y="23.400000000000002" width="0.8" height="0.8" fill="#7A7A7A"/><rect x="36.4" y="6.4" width="5.2" height="9.700000000000001" fill="#E97132"/><rect x="36.4" y="16.1" width="5.2" height="5.699999999999999" fill="#156082"/><rect x="40.144" y="6.4" width="1.4560000000000002" height="9.700000000000001" fill="#B4561F"/><rect x="40.144" y="16.1" width="1.4560000000000002" height="5.699999999999999" fill="#0E4A66"/><rect x="38.6" y="23.400000000000002" width="0.8" height="0.8" fill="#7A7A7A"/><rect x="18.0" y="25" width="1.2" height="1.2" fill="#156082"/><rect x="19.5" y="25.1" width="3.5" height="0.9" fill="#7A7A7A"/><rect x="24.5" y="25" width="1.2" height="1.2" fill="#E97132"/><rect x="26.0" y="25.1" width="3.5" height="0.9" fill="#7A7A7A"/></svg>
<div style="position:absolute;left:440.70px;top:57.00px;width:47.50px;height:28.60px;background:#FFFFFF;border:0.6px solid #E6E6E6;box-sizing:border-box;border-radius:0px;"></div>
<svg style="position:absolute;left:440.7px;top:57px;overflow:visible;" width="47.5" height="28.6" viewBox="0 0 47.5 28.6"><rect x="19.25" y="2.4" width="9" height="1.2" fill="#9A9A9A"/><rect x="3" y="6.55" width="2.6" height="0.9" fill="#C8C8C8"/><rect x="3" y="9.53" width="2.6" height="0.9" fill="#C8C8C8"/><rect x="3" y="12.51" width="2.6" height="0.9" fill="#C8C8C8"/><rect x="3" y="15.49" width="2.6" height="0.9" fill="#C8C8C8"/><rect x="3" y="18.47" width="2.6" height="0.9" fill="#C8C8C8"/><rect x="3" y="21.45" width="2.6" height="0.9" fill="#C8C8C8"/><rect x="9.5" y="7" width="5" height="9.100000000000001" fill="#E97132"/><rect x="9.5" y="16.1" width="5" height="5.799999999999997" fill="#156082"/><rect x="13.1" y="7" width="1.4000000000000001" height="9.100000000000001" fill="#B4561F"/><rect x="13.1" y="16.1" width="1.4000000000000001" height="5.799999999999997" fill="#0E4A66"/><rect x="11.6" y="23.5" width="0.8" height="0.8" fill="#C8C8C8"/><rect x="18.7" y="7" width="5" height="9.100000000000001" fill="#E97132"/><rect x="18.7" y="16.1" width="5" height="5.799999999999997" fill="#156082"/><rect x="22.299999999999997" y="7" width="1.4000000000000001" height="9.100000000000001" fill="#B4561F"/><rect x="22.299999999999997" y="16.1" width="1.4000000000000001" height="5.799999999999997" fill="#0E4A66"/><rect x="20.8" y="23.5" width="0.8" height="0.8" fill="#C8C8C8"/><rect x="27.3" y="7" width="5" height="9.100000000000001" fill="#E97132"/><rect x="27.3" y="16.1" width="5" height="5.799999999999997" fill="#156082"/><rect x="30.9" y="7" width="1.4000000000000001" height="9.100000000000001" fill="#B4561F"/><rect x="30.9" y="16.1" width="1.4000000000000001" height="5.799999999999997" fill="#0E4A66"/><rect x="29.400000000000002" y="23.5" width="0.8" height="0.8" fill="#C8C8C8"/><rect x="36" y="7" width="5" height="9.100000000000001" fill="#E97132"/><rect x="36" y="16.1" width="5" height="5.799999999999997" fill="#156082"/><rect x="39.6" y="7" width="1.4000000000000001" height="9.100000000000001" fill="#B4561F"/><rect x="39.6" y="16.1" width="1.4000000000000001" height="5.799999999999997" fill="#0E4A66"/><rect x="38.1" y="23.5" width="0.8" height="0.8" fill="#C8C8C8"/><rect x="17.75" y="25" width="1.2" height="1.2" fill="#156082"/><rect x="19.25" y="25.1" width="3.5" height="0.9" fill="#C8C8C8"/><rect x="24.25" y="25" width="1.2" height="1.2" fill="#E97132"/><rect x="25.75" y="25.1" width="3.5" height="0.9" fill="#C8C8C8"/></svg>
<div style="position:absolute;left:493.10px;top:57.00px;width:47.70px;height:28.60px;background:#FFFFFF;border:0.6px solid #E6E6E6;box-sizing:border-box;border-radius:0px;"></div>
<svg style="position:absolute;left:493.1px;top:57px;overflow:visible;" width="47.7" height="28.6" viewBox="0 0 47.7 28.6"><rect x="19.35" y="2.4" width="9" height="1.2" fill="#9A9A9A"/><rect x="3" y="6.30" width="2.6" height="0.9" fill="#C8C8C8"/><rect x="3" y="9.33" width="2.6" height="0.9" fill="#C8C8C8"/><rect x="3" y="12.36" width="2.6" height="0.9" fill="#C8C8C8"/><rect x="3" y="15.39" width="2.6" height="0.9" fill="#C8C8C8"/><rect x="3" y="18.42" width="2.6" height="0.9" fill="#C8C8C8"/><rect x="3" y="21.45" width="2.6" height="0.9" fill="#C8C8C8"/><rect x="10.2" y="6.75" width="5" height="9.350000000000001" fill="#E97132"/><rect x="10.2" y="16.1" width="5" height="5.799999999999997" fill="#156082"/><rect x="13.799999999999999" y="6.75" width="1.4000000000000001" height="9.350000000000001" fill="#B4561F"/><rect x="13.799999999999999" y="16.1" width="1.4000000000000001" height="5.799999999999997" fill="#0E4A66"/><rect x="12.299999999999999" y="23.5" width="0.8" height="0.8" fill="#C8C8C8"/><rect x="18.9" y="6.75" width="5" height="9.350000000000001" fill="#E97132"/><rect x="18.9" y="16.1" width="5" height="5.799999999999997" fill="#156082"/><rect x="22.5" y="6.75" width="1.4000000000000001" height="9.350000000000001" fill="#B4561F"/><rect x="22.5" y="16.1" width="1.4000000000000001" height="5.799999999999997" fill="#0E4A66"/><rect x="21.0" y="23.5" width="0.8" height="0.8" fill="#C8C8C8"/><rect x="27.9" y="6.75" width="5" height="9.350000000000001" fill="#E97132"/><rect x="27.9" y="16.1" width="5" height="5.799999999999997" fill="#156082"/><rect x="31.5" y="6.75" width="1.4000000000000001" height="9.350000000000001" fill="#B4561F"/><rect x="31.5" y="16.1" width="1.4000000000000001" height="5.799999999999997" fill="#0E4A66"/><rect x="30.0" y="23.5" width="0.8" height="0.8" fill="#C8C8C8"/><rect x="36.6" y="6.75" width="5" height="9.350000000000001" fill="#E97132"/><rect x="36.6" y="16.1" width="5" height="5.799999999999997" fill="#156082"/><rect x="40.2" y="6.75" width="1.4000000000000001" height="9.350000000000001" fill="#B4561F"/><rect x="40.2" y="16.1" width="1.4000000000000001" height="5.799999999999997" fill="#0E4A66"/><rect x="38.7" y="23.5" width="0.8" height="0.8" fill="#C8C8C8"/><rect x="17.85" y="25" width="1.2" height="1.2" fill="#156082"/><rect x="19.35" y="25.1" width="3.5" height="0.9" fill="#C8C8C8"/><rect x="24.35" y="25" width="1.2" height="1.2" fill="#E97132"/><rect x="25.85" y="25.1" width="3.5" height="0.9" fill="#C8C8C8"/></svg>
<div style="position:absolute;left:544.30px;top:54.00px;width:8.60px;height:35.70px;background:#FFFFFF;border:0.7px solid #D6D6D6;box-sizing:border-box;border-radius:2px;"></div>
<div style="position:absolute;left:544.30px;top:65.60px;width:8.60px;height:0.70px;background:#D6D6D6;border-radius:0px;"></div>
<div style="position:absolute;left:544.30px;top:82.00px;width:8.60px;height:0.70px;background:#D6D6D6;border-radius:0px;"></div>
<svg style="position:absolute;left:545px;top:57px;overflow:visible;" width="7" height="6" viewBox="0 0 7 6"><path d="M1.4 3.6 L3.4 1.6 L5.4 3.6" fill="none" stroke="#9A9A9A" stroke-width="0.7"/></svg>
<svg style="position:absolute;left:545px;top:70px;overflow:visible;" width="7" height="6" viewBox="0 0 7 6"><path d="M1.4 2 L3.4 4 L5.4 2" fill="none" stroke="#9A9A9A" stroke-width="0.7"/></svg>
<svg style="position:absolute;left:545px;top:83px;overflow:visible;" width="7" height="6" viewBox="0 0 7 6"><path d="M1.5 1.2 H5.3 M1.6 2.6 H5.2 V4.2 L3.4 5.2 L1.6 4.2 Z" fill="none" stroke="#444" stroke-width="0.7"/></svg>
<svg style="position:absolute;left:0;top:0" width="768" height="432"><text x="305.30" y="102.81" font-family="Liberation Sans" font-size="6.8" fill="#5E5E5E" font-weight="400" text-anchor="start" textLength="32.40" lengthAdjust="spacingAndGlyphs" stroke="#5E5E5E" stroke-width="0.08" style="white-space:pre;">Chart Styles</text></svg>
<div style="position:absolute;left:559.60px;top:51.00px;width:0.80px;height:52.00px;background:#E3E3E3;border-radius:0px;"></div>
<svg style="position:absolute;left:575px;top:50.5px;overflow:visible;" width="20" height="18" viewBox="0 0 20 18">
<rect x="1" y="5" width="18" height="11.5" fill="#fff" stroke="#6E6E6E" stroke-width="0.7"/>
<rect x="1" y="5" width="18" height="3.8" fill="#4A9BE8"/>
<rect x="1" y="5" width="6" height="11.5" fill="#4A9BE8"/>
<path d="M1 8.8 H19 M1 12.6 H19 M7 5 V16.5 M13 5 V16.5" stroke="#6E6E6E" stroke-width="0.6"/>
<path d="M3 4.4 C3.5 2.2 5 1.2 7.4 1.2 M6 0.2 L7.6 1.2 L6 2.4 M3.8 3 L3 4.6 L1.8 3.4" fill="none" stroke="#404040" stroke-width="0.7"/>
<path d="M9 1.2 L10.5 0" stroke="none"/>
</svg>
<svg style="position:absolute;left:0;top:0" width="768" height="432"><text x="565.60" y="79.02" font-family="Liberation Sans" font-size="8.0" fill="#3B3B3B" font-weight="400" text-anchor="start" textLength="39.00" lengthAdjust="spacingAndGlyphs" stroke="#3B3B3B" stroke-width="0.08" style="white-space:pre;">Switch Row/</text><text x="573.30" y="88.42" font-family="Liberation Sans" font-size="8.0" fill="#3B3B3B" font-weight="400" text-anchor="start" textLength="24.00" lengthAdjust="spacingAndGlyphs" stroke="#3B3B3B" stroke-width="0.08" style="white-space:pre;">Column</text></svg>
<svg style="position:absolute;left:610px;top:51px;overflow:visible;" width="20" height="19" viewBox="0 0 20 19">
<rect x="1" y="1" width="16" height="12.5" fill="#fff" stroke="#6E6E6E" stroke-width="0.7"/>
<rect x="1" y="1" width="11" height="8.3" fill="#4A9BE8"/>
<path d="M1 5.2 H17 M1 9.3 H17 M6.3 1 V13.5 M11.6 1 V13.5" stroke="#6E6E6E" stroke-width="0.6"/>
<rect x="10" y="11" width="3" height="7.2" fill="#fff" stroke="#6E6E6E" stroke-width="0.7"/>
<rect x="13" y="8.5" width="3" height="9.7" fill="#E0E0E0" stroke="#6E6E6E" stroke-width="0.7"/>
<rect x="16" y="11.5" width="2.6" height="6.7" fill="#4A9BE8" stroke="#3A7CC0" stroke-width="0.6"/>
</svg>
<svg style="position:absolute;left:0;top:0" width="768" height="432"><text x="610.40" y="79.02" font-family="Liberation Sans" font-size="8.0" fill="#3B3B3B" font-weight="400" text-anchor="start" textLength="18.10" lengthAdjust="spacingAndGlyphs" stroke="#3B3B3B" stroke-width="0.08" style="white-space:pre;">Select</text><text x="613.00" y="88.42" font-family="Liberation Sans" font-size="8.0" fill="#3B3B3B" font-weight="400" text-anchor="start" textLength="13.50" lengthAdjust="spacingAndGlyphs" stroke="#3B3B3B" stroke-width="0.08" style="white-space:pre;">Data</text><text x="598.00" y="102.81" font-family="Liberation Sans" font-size="6.8" fill="#5E5E5E" font-weight="400" text-anchor="middle" textLength="12.50" lengthAdjust="spacingAndGlyphs" stroke="#5E5E5E" stroke-width="0.08" style="white-space:pre;">Data</text></svg>
<div style="position:absolute;left:636.50px;top:51.00px;width:0.80px;height:52.00px;background:#E3E3E3;border-radius:0px;"></div>
<svg style="position:absolute;left:650px;top:51px;overflow:visible;" width="19" height="19" viewBox="0 0 19 19">
<rect x="2" y="7" width="4.2" height="11" fill="#D6D6D6" stroke="#6E6E6E" stroke-width="0.7"/>
<rect x="6.2" y="1.2" width="4.6" height="16.8" fill="#fff" stroke="#6E6E6E" stroke-width="0.7"/>
<rect x="10.8" y="3.8" width="4.8" height="14.2" fill="#5FA8E8" stroke="#3A7CC0" stroke-width="0.7"/>
<path d="M12.6 4.6 V17.4 M14 4.6 V17.4" stroke="#9BC9F1" stroke-width="0.5"/>
</svg>
<svg style="position:absolute;left:0;top:0" width="768" height="432"><text x="647.90" y="79.02" font-family="Liberation Sans" font-size="8.0" fill="#3B3B3B" font-weight="400" text-anchor="start" textLength="23.80" lengthAdjust="spacingAndGlyphs" stroke="#3B3B3B" stroke-width="0.08" style="white-space:pre;">Change</text><text x="642.70" y="88.42" font-family="Liberation Sans" font-size="8.0" fill="#3B3B3B" font-weight="400" text-anchor="start" textLength="33.80" lengthAdjust="spacingAndGlyphs" stroke="#3B3B3B" stroke-width="0.08" style="white-space:pre;">Chart Type</text><text x="659.50" y="102.81" font-family="Liberation Sans" font-size="6.8" fill="#5E5E5E" font-weight="400" text-anchor="middle" textLength="13.00" lengthAdjust="spacingAndGlyphs" stroke="#5E5E5E" stroke-width="0.08" style="white-space:pre;">Type</text></svg>
<div style="position:absolute;left:682.70px;top:51.00px;width:0.80px;height:52.00px;background:#E3E3E3;border-radius:0px;"></div>
<svg style="position:absolute;left:690px;top:51px;overflow:visible;" width="21" height="19" viewBox="0 0 21 19">
<path d="M2.5 1 H17.5 V9 M2.5 1 V12.5 L4.5 14.5 H9" fill="none" stroke="#6E6E6E" stroke-width="0.7"/>
<path d="M2.5 5 H17.5 M2.5 9 H12 M7.5 1 V13.5 M12.5 1 V9" stroke="#6E6E6E" stroke-width="0.6"/>
<rect x="10.5" y="11" width="3" height="7.2" fill="#fff" stroke="#6E6E6E" stroke-width="0.7"/>
<rect x="13.5" y="8.4" width="3" height="9.8" fill="#E0E0E0" stroke="#6E6E6E" stroke-width="0.7"/>
<rect x="16.5" y="11" width="2.8" height="7.2" fill="#4A9BE8" stroke="#3A7CC0" stroke-width="0.6"/>
</svg>
<svg style="position:absolute;left:0;top:0" width="768" height="432"><text x="691.00" y="79.02" font-family="Liberation Sans" font-size="8.0" fill="#3B3B3B" font-weight="400" text-anchor="start" textLength="17.70" lengthAdjust="spacingAndGlyphs" stroke="#3B3B3B" stroke-width="0.08" style="white-space:pre;">Move</text><text x="692.00" y="88.42" font-family="Liberation Sans" font-size="8.0" fill="#3B3B3B" font-weight="400" text-anchor="start" textLength="15.70" lengthAdjust="spacingAndGlyphs" stroke="#3B3B3B" stroke-width="0.08" style="white-space:pre;">Chart</text><text x="700.00" y="102.81" font-family="Liberation Sans" font-size="6.8" fill="#5E5E5E" font-weight="400" text-anchor="middle" textLength="24.00" lengthAdjust="spacingAndGlyphs" stroke="#5E5E5E" stroke-width="0.08" style="white-space:pre;">Location</text></svg>
<div style="position:absolute;left:716.80px;top:51.00px;width:0.80px;height:52.00px;background:#E3E3E3;border-radius:0px;"></div>
<svg style="position:absolute;left:750.5px;top:95px;overflow:visible;" width="8" height="6" viewBox="0 0 8 6"><path d="M1 1.2 L4 4.2 L7 1.2" fill="none" stroke="#444" stroke-width="0.9"/></svg>
<div style="position:absolute;left:0.00px;top:130.00px;width:584.30px;height:10.40px;background:#F3F3F3;border-radius:0px;"></div>
<div style="position:absolute;left:0.00px;top:130.00px;width:15.50px;height:240.50px;background:#F3F3F3;border-radius:0px;"></div>
<svg style="position:absolute;left:0;top:0" width="768" height="432"><rect x="114.50" y="140.4" width="0.7" height="230.10" fill="#E2E2E2"/><rect x="210.90" y="140.4" width="0.7" height="230.10" fill="#E2E2E2"/><rect x="292.40" y="140.4" width="0.7" height="230.10" fill="#E2E2E2"/><rect x="367.20" y="140.4" width="0.7" height="230.10" fill="#E2E2E2"/><rect x="405.95" y="140.4" width="0.7" height="230.10" fill="#E2E2E2"/><rect x="444.10" y="140.4" width="0.7" height="230.10" fill="#E2E2E2"/><rect x="482.50" y="140.4" width="0.7" height="230.10" fill="#E2E2E2"/><rect x="521.30" y="140.4" width="0.7" height="230.10" fill="#E2E2E2"/><rect x="559.70" y="140.4" width="0.7" height="230.10" fill="#E2E2E2"/><rect x="584.00" y="140.4" width="0.7" height="230.10" fill="#E2E2E2"/><rect x="15.5" y="152.10" width="570" height="0.7" fill="#E2E2E2"/><rect x="15.5" y="164.10" width="570" height="0.7" fill="#E2E2E2"/><rect x="15.5" y="176.10" width="570" height="0.7" fill="#E2E2E2"/><rect x="15.5" y="188.10" width="570" height="0.7" fill="#E2E2E2"/><rect x="15.5" y="200.10" width="570" height="0.7" fill="#E2E2E2"/><rect x="15.5" y="211.70" width="570" height="0.7" fill="#E2E2E2"/><rect x="15.5" y="223.30" width="570" height="0.7" fill="#E2E2E2"/><rect x="15.5" y="234.90" width="570" height="0.7" fill="#E2E2E2"/><rect x="15.5" y="246.50" width="570" height="0.7" fill="#E2E2E2"/><rect x="15.5" y="258.10" width="570" height="0.7" fill="#E2E2E2"/><rect x="15.5" y="269.70" width="570" height="0.7" fill="#E2E2E2"/><rect x="15.5" y="281.30" width="570" height="0.7" fill="#E2E2E2"/><rect x="15.5" y="292.90" width="570" height="0.7" fill="#E2E2E2"/><rect x="15.5" y="304.50" width="570" height="0.7" fill="#E2E2E2"/><rect x="15.5" y="316.10" width="570" height="0.7" fill="#E2E2E2"/><rect x="15.5" y="327.70" width="570" height="0.7" fill="#E2E2E2"/><rect x="15.5" y="339.30" width="570" height="0.7" fill="#E2E2E2"/><rect x="15.5" y="350.90" width="570" height="0.7" fill="#E2E2E2"/><rect x="15.5" y="362.50" width="570" height="0.7" fill="#E2E2E2"/><rect x="15.20" y="130" width="0.6" height="10.4" fill="#DADADA"/><rect x="114.50" y="130" width="0.6" height="10.4" fill="#DADADA"/><rect x="210.90" y="130" width="0.6" height="10.4" fill="#DADADA"/><rect x="292.40" y="130" width="0.6" height="10.4" fill="#DADADA"/><rect x="367.20" y="130" width="0.6" height="10.4" fill="#DADADA"/><rect x="405.95" y="130" width="0.6" height="10.4" fill="#DADADA"/><rect x="444.10" y="130" width="0.6" height="10.4" fill="#DADADA"/><rect x="482.50" y="130" width="0.6" height="10.4" fill="#DADADA"/><rect x="521.30" y="130" width="0.6" height="10.4" fill="#DADADA"/><rect x="559.70" y="130" width="0.6" height="10.4" fill="#DADADA"/><rect x="584.00" y="130" width="0.6" height="10.4" fill="#DADADA"/><rect x="0" y="140.10" width="15.5" height="0.6" fill="#DADADA"/><rect x="0" y="152.10" width="15.5" height="0.6" fill="#DADADA"/><rect x="0" y="164.10" width="15.5" height="0.6" fill="#DADADA"/><rect x="0" y="176.10" width="15.5" height="0.6" fill="#DADADA"/><rect x="0" y="188.10" width="15.5" height="0.6" fill="#DADADA"/><rect x="0" y="200.10" width="15.5" height="0.6" fill="#DADADA"/><rect x="0" y="211.70" width="15.5" height="0.6" fill="#DADADA"/><rect x="0" y="223.30" width="15.5" height="0.6" fill="#DADADA"/><rect x="0" y="234.90" width="15.5" height="0.6" fill="#DADADA"/><rect x="0" y="246.50" width="15.5" height="0.6" fill="#DADADA"/><rect x="0" y="258.10" width="15.5" height="0.6" fill="#DADADA"/><rect x="0" y="269.70" width="15.5" height="0.6" fill="#DADADA"/><rect x="0" y="281.30" width="15.5" height="0.6" fill="#DADADA"/><rect x="0" y="292.90" width="15.5" height="0.6" fill="#DADADA"/><rect x="0" y="304.50" width="15.5" height="0.6" fill="#DADADA"/><rect x="0" y="316.10" width="15.5" height="0.6" fill="#DADADA"/><rect x="0" y="327.70" width="15.5" height="0.6" fill="#DADADA"/><rect x="0" y="339.30" width="15.5" height="0.6" fill="#DADADA"/><rect x="0" y="350.90" width="15.5" height="0.6" fill="#DADADA"/><rect x="0" y="362.50" width="15.5" height="0.6" fill="#DADADA"/><rect x="0" y="140.1" width="584.3" height="0.6" fill="#D4D4D4"/><rect x="15.2" y="130" width="0.6" height="240.5" fill="#D4D4D4"/></svg>
<svg style="position:absolute;left:4px;top:132px;overflow:visible;" width="11" height="8" viewBox="0 0 11 8"><path d="M9.6 1 V7.2 H3.2 Z" fill="#D0D0D0"/></svg>
<svg style="position:absolute;left:0;top:0" width="768" height="432"><text x="65.15" y="138.18" font-family="Liberation Sans" font-size="7.6" fill="#6E6E6E" font-weight="400" text-anchor="middle" stroke="#6E6E6E" stroke-width="0.08" style="white-space:pre;">A</text><text x="163.00" y="138.18" font-family="Liberation Sans" font-size="7.6" fill="#6E6E6E" font-weight="400" text-anchor="middle" stroke="#6E6E6E" stroke-width="0.08" style="white-space:pre;">B</text><text x="251.95" y="138.18" font-family="Liberation Sans" font-size="7.6" fill="#6E6E6E" font-weight="400" text-anchor="middle" stroke="#6E6E6E" stroke-width="0.08" style="white-space:pre;">C</text><text x="330.10" y="138.18" font-family="Liberation Sans" font-size="7.6" fill="#6E6E6E" font-weight="400" text-anchor="middle" stroke="#6E6E6E" stroke-width="0.08" style="white-space:pre;">D</text><text x="386.88" y="138.18" font-family="Liberation Sans" font-size="7.6" fill="#6E6E6E" font-weight="400" text-anchor="middle" stroke="#6E6E6E" stroke-width="0.08" style="white-space:pre;">E</text><text x="425.32" y="138.18" font-family="Liberation Sans" font-size="7.6" fill="#6E6E6E" font-weight="400" text-anchor="middle" stroke="#6E6E6E" stroke-width="0.08" style="white-space:pre;">F</text><text x="463.60" y="138.18" font-family="Liberation Sans" font-size="7.6" fill="#6E6E6E" font-weight="400" text-anchor="middle" stroke="#6E6E6E" stroke-width="0.08" style="white-space:pre;">G</text><text x="502.20" y="138.18" font-family="Liberation Sans" font-size="7.6" fill="#6E6E6E" font-weight="400" text-anchor="middle" stroke="#6E6E6E" stroke-width="0.08" style="white-space:pre;">H</text><text x="540.80" y="138.18" font-family="Liberation Sans" font-size="7.6" fill="#6E6E6E" font-weight="400" text-anchor="middle" stroke="#6E6E6E" stroke-width="0.08" style="white-space:pre;">I</text><text x="572.15" y="138.18" font-family="Liberation Sans" font-size="7.6" fill="#6E6E6E" font-weight="400" text-anchor="middle" stroke="#6E6E6E" stroke-width="0.08" style="white-space:pre;">J</text><text x="8.20" y="149.38" font-family="Liberation Sans" font-size="7.6" fill="#6E6E6E" font-weight="400" text-anchor="middle" stroke="#6E6E6E" stroke-width="0.08" style="white-space:pre;">1</text><text x="8.20" y="161.38" font-family="Liberation Sans" font-size="7.6" fill="#6E6E6E" font-weight="400" text-anchor="middle" stroke="#6E6E6E" stroke-width="0.08" style="white-space:pre;">2</text><text x="8.20" y="173.38" font-family="Liberation Sans" font-size="7.6" fill="#6E6E6E" font-weight="400" text-anchor="middle" stroke="#6E6E6E" stroke-width="0.08" style="white-space:pre;">3</text><text x="8.20" y="185.38" font-family="Liberation Sans" font-size="7.6" fill="#6E6E6E" font-weight="400" text-anchor="middle" stroke="#6E6E6E" stroke-width="0.08" style="white-space:pre;">4</text><text x="8.20" y="197.38" font-family="Liberation Sans" font-size="7.6" fill="#6E6E6E" font-weight="400" text-anchor="middle" stroke="#6E6E6E" stroke-width="0.08" style="white-space:pre;">5</text><text x="8.20" y="209.18" font-family="Liberation Sans" font-size="7.6" fill="#6E6E6E" font-weight="400" text-anchor="middle" stroke="#6E6E6E" stroke-width="0.08" style="white-space:pre;">6</text><text x="8.20" y="220.78" font-family="Liberation Sans" font-size="7.6" fill="#6E6E6E" font-weight="400" text-anchor="middle" stroke="#6E6E6E" stroke-width="0.08" style="white-space:pre;">7</text><text x="8.20" y="232.38" font-family="Liberation Sans" font-size="7.6" fill="#6E6E6E" font-weight="400" text-anchor="middle" stroke="#6E6E6E" stroke-width="0.08" style="white-space:pre;">8</text><text x="8.20" y="243.98" font-family="Liberation Sans" font-size="7.6" fill="#6E6E6E" font-weight="400" text-anchor="middle" stroke="#6E6E6E" stroke-width="0.08" style="white-space:pre;">9</text><text x="8.20" y="255.58" font-family="Liberation Sans" font-size="7.6" fill="#6E6E6E" font-weight="400" text-anchor="middle" stroke="#6E6E6E" stroke-width="0.08" style="white-space:pre;">10</text><text x="8.20" y="267.18" font-family="Liberation Sans" font-size="7.6" fill="#6E6E6E" font-weight="400" text-anchor="middle" stroke="#6E6E6E" stroke-width="0.08" style="white-space:pre;">11</text><text x="8.20" y="278.78" font-family="Liberation Sans" font-size="7.6" fill="#6E6E6E" font-weight="400" text-anchor="middle" stroke="#6E6E6E" stroke-width="0.08" style="white-space:pre;">12</text><text x="8.20" y="290.38" font-family="Liberation Sans" font-size="7.6" fill="#6E6E6E" font-weight="400" text-anchor="middle" stroke="#6E6E6E" stroke-width="0.08" style="white-space:pre;">13</text><text x="8.20" y="301.98" font-family="Liberation Sans" font-size="7.6" fill="#6E6E6E" font-weight="400" text-anchor="middle" stroke="#6E6E6E" stroke-width="0.08" style="white-space:pre;">14</text><text x="8.20" y="313.58" font-family="Liberation Sans" font-size="7.6" fill="#6E6E6E" font-weight="400" text-anchor="middle" stroke="#6E6E6E" stroke-width="0.08" style="white-space:pre;">15</text><text x="8.20" y="325.18" font-family="Liberation Sans" font-size="7.6" fill="#6E6E6E" font-weight="400" text-anchor="middle" stroke="#6E6E6E" stroke-width="0.08" style="white-space:pre;">16</text><text x="8.20" y="336.78" font-family="Liberation Sans" font-size="7.6" fill="#6E6E6E" font-weight="400" text-anchor="middle" stroke="#6E6E6E" stroke-width="0.08" style="white-space:pre;">17</text><text x="8.20" y="348.38" font-family="Liberation Sans" font-size="7.6" fill="#6E6E6E" font-weight="400" text-anchor="middle" stroke="#6E6E6E" stroke-width="0.08" style="white-space:pre;">18</text><text x="8.20" y="359.98" font-family="Liberation Sans" font-size="7.6" fill="#6E6E6E" font-weight="400" text-anchor="middle" stroke="#6E6E6E" stroke-width="0.08" style="white-space:pre;">19</text><text x="8.20" y="371.58" font-family="Liberation Sans" font-size="7.6" fill="#6E6E6E" font-weight="400" text-anchor="middle" stroke="#6E6E6E" stroke-width="0.08" style="white-space:pre;">20</text></svg>
<div style="position:absolute;left:211.20px;top:140.40px;width:81.50px;height:12.00px;background:#FBEAEA;border-radius:0px;"></div>
<div style="position:absolute;left:211.20px;top:152.40px;width:81.50px;height:48.00px;background:#EDF1FA;border-radius:0px;"></div>
<svg style="position:absolute;left:0;top:0" width="768" height="432"><rect x="15.5" y="151.90" width="352.5" height="1" fill="#5E5E5E"/><rect x="15.5" y="163.90" width="352.5" height="1" fill="#5E5E5E"/><rect x="15.5" y="175.90" width="352.5" height="1" fill="#5E5E5E"/><rect x="15.5" y="187.90" width="352.5" height="1" fill="#5E5E5E"/><rect x="15.5" y="199.90" width="352.5" height="1" fill="#5E5E5E"/><rect x="114.30" y="140.4" width="1" height="60.5" fill="#5E5E5E"/><rect x="367.00" y="140.4" width="1" height="60.5" fill="#5E5E5E"/><rect x="292.2" y="140.4" width="1" height="12" fill="#5E5E5E"/><rect x="210.7" y="140.4" width="1" height="12" fill="#E8806E"/><rect x="292.2" y="140.4" width="1" height="12" fill="#E8806E"/><rect x="210.7" y="151.9" width="82.5" height="1" fill="#7AA0E4"/><rect x="210.7" y="199.9" width="82.5" height="1" fill="#7AA0E4"/><rect x="210.7" y="152.4" width="1.1" height="48" fill="#7AA0E4"/><rect x="292.2" y="152.4" width="1.1" height="48" fill="#7AA0E4"/><rect x="210.20" y="140.00" width="2" height="2" fill="#E8806E"/><rect x="291.70" y="140.00" width="2" height="2" fill="#E8806E"/><rect x="210.20" y="151.40" width="2" height="2" fill="#2D62D8"/><rect x="291.70" y="151.40" width="2" height="2" fill="#2D62D8"/><rect x="210.20" y="199.40" width="2" height="2" fill="#2D62D8"/><rect x="291.70" y="199.40" width="2" height="2" fill="#2D62D8"/></svg>
<svg style="position:absolute;left:0;top:0" width="768" height="432"><text x="65.15" y="150.00" font-family="Liberation Sans" font-size="9" fill="#1F1F1F" font-weight="700" text-anchor="middle" textLength="36.20" lengthAdjust="spacingAndGlyphs" stroke="#1F1F1F" stroke-width="0.08" style="white-space:pre;">Category</text><text x="163.00" y="150.00" font-family="Liberation Sans" font-size="9" fill="#1F1F1F" font-weight="700" text-anchor="middle" textLength="31.60" lengthAdjust="spacingAndGlyphs" stroke="#1F1F1F" stroke-width="0.08" style="white-space:pre;">Series 1</text><text x="252.00" y="150.00" font-family="Liberation Sans" font-size="9" fill="#1F1F1F" font-weight="700" text-anchor="middle" textLength="31.60" lengthAdjust="spacingAndGlyphs" stroke="#1F1F1F" stroke-width="0.08" style="white-space:pre;">Series 2</text><text x="330.10" y="150.00" font-family="Liberation Sans" font-size="9" fill="#1F1F1F" font-weight="700" text-anchor="middle" textLength="31.60" lengthAdjust="spacingAndGlyphs" stroke="#1F1F1F" stroke-width="0.08" style="white-space:pre;">Series 3</text><text x="65.15" y="162.00" font-family="Liberation Sans" font-size="9" fill="#1F1F1F" font-weight="400" text-anchor="middle" textLength="31.90" lengthAdjust="spacingAndGlyphs" stroke="#1F1F1F" stroke-width="0.08" style="white-space:pre;">Q1 2024</text><text x="163.00" y="162.00" font-family="Liberation Sans" font-size="9" fill="#1F1F1F" font-weight="400" text-anchor="middle" textLength="9.20" lengthAdjust="spacingAndGlyphs" stroke="#1F1F1F" stroke-width="0.08" style="white-space:pre;">10</text><text x="252.00" y="162.00" font-family="Liberation Sans" font-size="9" fill="#1F1F1F" font-weight="400" text-anchor="middle" textLength="9.20" lengthAdjust="spacingAndGlyphs" stroke="#1F1F1F" stroke-width="0.08" style="white-space:pre;">20</text><text x="330.10" y="162.00" font-family="Liberation Sans" font-size="9" fill="#1F1F1F" font-weight="400" text-anchor="middle" textLength="9.20" lengthAdjust="spacingAndGlyphs" stroke="#1F1F1F" stroke-width="0.08" style="white-space:pre;">30</text><text x="65.15" y="174.00" font-family="Liberation Sans" font-size="9" fill="#1F1F1F" font-weight="400" text-anchor="middle" textLength="31.90" lengthAdjust="spacingAndGlyphs" stroke="#1F1F1F" stroke-width="0.08" style="white-space:pre;">Q2 2024</text><text x="163.00" y="174.00" font-family="Liberation Sans" font-size="9" fill="#1F1F1F" font-weight="400" text-anchor="middle" textLength="9.20" lengthAdjust="spacingAndGlyphs" stroke="#1F1F1F" stroke-width="0.08" style="white-space:pre;">15</text><text x="252.00" y="174.00" font-family="Liberation Sans" font-size="9" fill="#1F1F1F" font-weight="400" text-anchor="middle" textLength="9.20" lengthAdjust="spacingAndGlyphs" stroke="#1F1F1F" stroke-width="0.08" style="white-space:pre;">25</text><text x="330.10" y="174.00" font-family="Liberation Sans" font-size="9" fill="#1F1F1F" font-weight="400" text-anchor="middle" textLength="9.20" lengthAdjust="spacingAndGlyphs" stroke="#1F1F1F" stroke-width="0.08" style="white-space:pre;">35</text><text x="65.15" y="186.00" font-family="Liberation Sans" font-size="9" fill="#1F1F1F" font-weight="400" text-anchor="middle" textLength="31.90" lengthAdjust="spacingAndGlyphs" stroke="#1F1F1F" stroke-width="0.08" style="white-space:pre;">Q3 2024</text><text x="163.00" y="186.00" font-family="Liberation Sans" font-size="9" fill="#1F1F1F" font-weight="400" text-anchor="middle" textLength="9.20" lengthAdjust="spacingAndGlyphs" stroke="#1F1F1F" stroke-width="0.08" style="white-space:pre;">20</text><text x="252.00" y="186.00" font-family="Liberation Sans" font-size="9" fill="#1F1F1F" font-weight="400" text-anchor="middle" textLength="9.20" lengthAdjust="spacingAndGlyphs" stroke="#1F1F1F" stroke-width="0.08" style="white-space:pre;">30</text><text x="330.10" y="186.00" font-family="Liberation Sans" font-size="9" fill="#1F1F1F" font-weight="400" text-anchor="middle" textLength="9.20" lengthAdjust="spacingAndGlyphs" stroke="#1F1F1F" stroke-width="0.08" style="white-space:pre;">40</text><text x="65.15" y="198.00" font-family="Liberation Sans" font-size="9" fill="#1F1F1F" font-weight="400" text-anchor="middle" textLength="31.90" lengthAdjust="spacingAndGlyphs" stroke="#1F1F1F" stroke-width="0.08" style="white-space:pre;">Q4 2024</text><text x="163.00" y="198.00" font-family="Liberation Sans" font-size="9" fill="#1F1F1F" font-weight="400" text-anchor="middle" textLength="9.20" lengthAdjust="spacingAndGlyphs" stroke="#1F1F1F" stroke-width="0.08" style="white-space:pre;">25</text><text x="252.00" y="198.00" font-family="Liberation Sans" font-size="9" fill="#1F1F1F" font-weight="400" text-anchor="middle" textLength="9.20" lengthAdjust="spacingAndGlyphs" stroke="#1F1F1F" stroke-width="0.08" style="white-space:pre;">35</text><text x="330.10" y="198.00" font-family="Liberation Sans" font-size="9" fill="#1F1F1F" font-weight="400" text-anchor="middle" textLength="9.20" lengthAdjust="spacingAndGlyphs" stroke="#1F1F1F" stroke-width="0.08" style="white-space:pre;">45</text></svg>
<div style="position:absolute;left:373.60px;top:153.00px;width:210.70px;height:172.50px;background:#FFFFFF;border-radius:0px;"></div>
<svg style="position:absolute;left:0;top:0" width="768" height="432"><defs><clipPath id="chclip"><rect x="0" y="0" width="584.3" height="432"/></clipPath></defs><g clip-path="url(#chclip)"><path d="M584.3 153 H373.6 V325.5 H584.3" fill="none" stroke="#A8A8A8" stroke-width="0.9"/><path d="M412.1 198.30 L430.4 184.30 H584.3" fill="none" stroke="#DCDCDC" stroke-width="0.8"/><path d="M412.1 215.60 L430.4 201.60 H584.3" fill="none" stroke="#DCDCDC" stroke-width="0.8"/><path d="M412.1 233.50 L430.4 219.50 H584.3" fill="none" stroke="#DCDCDC" stroke-width="0.8"/><path d="M412.1 251.30 L430.4 237.30 H584.3" fill="none" stroke="#DCDCDC" stroke-width="0.8"/><path d="M412.1 269.20 L430.4 255.20 H584.3" fill="none" stroke="#DCDCDC" stroke-width="0.8"/><path d="M412.1 287.20 L430.4 273.20 H584.3" fill="none" stroke="#DCDCDC" stroke-width="0.8"/><rect x="433.6" y="193.7" width="21.40" height="53.52" fill="#E97132"/><path d="M455.0 193.7 L461.8 188.29999999999998 V241.81999999999996 L455.0 247.21999999999997 Z" fill="#964A1F"/><path d="M433.6 193.7 L440.40000000000003 188.29999999999998 H461.8 L455.0 193.7 Z" fill="#B85A25"/><rect x="433.6" y="247.22" width="21.40" height="35.68" fill="#156082"/><path d="M455.0 247.22 L461.8 241.82 V277.5 L455.0 282.9 Z" fill="#0D3E54"/><rect x="486.3" y="193.7" width="21.10" height="52.03" fill="#E97132"/><path d="M507.4 193.7 L514.4 188.29999999999998 V240.33333333333331 L507.4 245.73333333333332 Z" fill="#964A1F"/><path d="M486.3 193.7 L493.3 188.29999999999998 H514.4 L507.4 193.7 Z" fill="#B85A25"/><rect x="486.3" y="245.73" width="21.10" height="37.17" fill="#156082"/><path d="M507.4 245.73 L514.4 240.33 V277.5 L507.4 282.9 Z" fill="#0D3E54"/><rect x="539.0" y="193.7" width="21.10" height="50.97" fill="#E97132"/><path d="M560.1 193.7 L567.2 188.29999999999998 V239.27142857142854 L560.1 244.67142857142855 Z" fill="#964A1F"/><path d="M539.0 193.7 L546.1 188.29999999999998 H567.2 L560.1 193.7 Z" fill="#B85A25"/><rect x="539.0" y="244.67" width="21.10" height="38.23" fill="#156082"/><path d="M560.1 244.67 L567.2 239.27 V277.5 L560.1 282.9 Z" fill="#0D3E54"/></g></svg>
<svg style="position:absolute;left:0;top:0" width="768" height="432"><text x="405.40" y="200.80" font-family="Liberation Sans" font-size="7" fill="#595959" font-weight="400" text-anchor="end" textLength="15.80" lengthAdjust="spacingAndGlyphs" stroke="#595959" stroke-width="0.08" style="white-space:pre;">100%</text><text x="405.40" y="218.10" font-family="Liberation Sans" font-size="7" fill="#595959" font-weight="400" text-anchor="end" textLength="12.30" lengthAdjust="spacingAndGlyphs" stroke="#595959" stroke-width="0.08" style="white-space:pre;">80%</text><text x="405.40" y="236.00" font-family="Liberation Sans" font-size="7" fill="#595959" font-weight="400" text-anchor="end" textLength="12.30" lengthAdjust="spacingAndGlyphs" stroke="#595959" stroke-width="0.08" style="white-space:pre;">60%</text><text x="405.40" y="253.80" font-family="Liberation Sans" font-size="7" fill="#595959" font-weight="400" text-anchor="end" textLength="12.30" lengthAdjust="spacingAndGlyphs" stroke="#595959" stroke-width="0.08" style="white-space:pre;">40%</text><text x="405.40" y="271.70" font-family="Liberation Sans" font-size="7" fill="#595959" font-weight="400" text-anchor="end" textLength="12.30" lengthAdjust="spacingAndGlyphs" stroke="#595959" stroke-width="0.08" style="white-space:pre;">20%</text><text x="405.40" y="289.70" font-family="Liberation Sans" font-size="7" fill="#595959" font-weight="400" text-anchor="end" textLength="8.70" lengthAdjust="spacingAndGlyphs" stroke="#595959" stroke-width="0.08" style="white-space:pre;">0%</text><text x="500.80" y="169.30" font-family="Liberation Sans" font-size="11.5" fill="#595959" font-weight="400" text-anchor="start" textLength="33.40" lengthAdjust="spacingAndGlyphs" stroke="#595959" stroke-width="0.08" style="white-space:pre;">Chart A</text><text x="438.50" y="298.80" font-family="Liberation Sans" font-size="7" fill="#595959" font-weight="400" text-anchor="middle" stroke="#595959" stroke-width="0.08" style="white-space:pre;">1</text><text x="491.05" y="298.80" font-family="Liberation Sans" font-size="7" fill="#595959" font-weight="400" text-anchor="middle" stroke="#595959" stroke-width="0.08" style="white-space:pre;">2</text><text x="543.75" y="298.80" font-family="Liberation Sans" font-size="7" fill="#595959" font-weight="400" text-anchor="middle" stroke="#595959" stroke-width="0.08" style="white-space:pre;">3</text></svg>
<div style="position:absolute;left:487.00px;top:311.20px;width:4.00px;height:4.00px;background:#156082;border-radius:0px;"></div>
<svg style="position:absolute;left:0;top:0" width="768" height="432"><text x="492.90" y="315.80" font-family="Liberation Sans" font-size="7.1" fill="#595959" font-weight="400" text-anchor="start" textLength="22.80" lengthAdjust="spacingAndGlyphs" stroke="#595959" stroke-width="0.08" style="white-space:pre;">Series 2</text></svg>
<div style="position:absolute;left:522.00px;top:311.20px;width:4.00px;height:4.00px;background:#E97132;border-radius:0px;"></div>
<svg style="position:absolute;left:0;top:0" width="768" height="432"><text x="527.80" y="315.80" font-family="Liberation Sans" font-size="7.1" fill="#595959" font-weight="400" text-anchor="start" textLength="22.90" lengthAdjust="spacingAndGlyphs" stroke="#595959" stroke-width="0.08" style="white-space:pre;">Series 3</text></svg>
<svg style="position:absolute;left:0;top:0" width="768" height="432"><circle cx="433.60" cy="247.22" r="1.95" fill="#EEF4FB" stroke="#5B9BE0" stroke-width="0.8"/><circle cx="440.60" cy="241.62" r="1.95" fill="#EEF4FB" stroke="#5B9BE0" stroke-width="0.8"/><circle cx="461.80" cy="241.62" r="1.95" fill="#EEF4FB" stroke="#5B9BE0" stroke-width="0.8"/><circle cx="433.60" cy="282.90" r="1.95" fill="#EEF4FB" stroke="#5B9BE0" stroke-width="0.8"/><circle cx="455.00" cy="282.90" r="1.95" fill="#EEF4FB" stroke="#5B9BE0" stroke-width="0.8"/><circle cx="461.80" cy="277.30" r="1.95" fill="#EEF4FB" stroke="#5B9BE0" stroke-width="0.8"/><circle cx="486.30" cy="245.73" r="1.95" fill="#EEF4FB" stroke="#5B9BE0" stroke-width="0.8"/><circle cx="493.50" cy="240.13" r="1.95" fill="#EEF4FB" stroke="#5B9BE0" stroke-width="0.8"/><circle cx="514.40" cy="240.13" r="1.95" fill="#EEF4FB" stroke="#5B9BE0" stroke-width="0.8"/><circle cx="486.30" cy="282.90" r="1.95" fill="#EEF4FB" stroke="#5B9BE0" stroke-width="0.8"/><circle cx="507.40" cy="282.90" r="1.95" fill="#EEF4FB" stroke="#5B9BE0" stroke-width="0.8"/><circle cx="514.40" cy="277.30" r="1.95" fill="#EEF4FB" stroke="#5B9BE0" stroke-width="0.8"/><circle cx="539.00" cy="244.67" r="1.95" fill="#EEF4FB" stroke="#5B9BE0" stroke-width="0.8"/><circle cx="546.30" cy="239.07" r="1.95" fill="#EEF4FB" stroke="#5B9BE0" stroke-width="0.8"/><circle cx="567.20" cy="239.07" r="1.95" fill="#EEF4FB" stroke="#5B9BE0" stroke-width="0.8"/><circle cx="539.00" cy="282.90" r="1.95" fill="#EEF4FB" stroke="#5B9BE0" stroke-width="0.8"/><circle cx="560.10" cy="282.90" r="1.95" fill="#EEF4FB" stroke="#5B9BE0" stroke-width="0.8"/><circle cx="567.20" cy="277.30" r="1.95" fill="#EEF4FB" stroke="#5B9BE0" stroke-width="0.8"/></svg>
<div style="position:absolute;left:454.00px;top:265.60px;width:79.30px;height:21.00px;background:#F7F7F7;border:0.7px solid #C9C9C9;box-sizing:border-box;border-radius:0px;box-shadow:1px 1px 1.5px rgba(0,0,0,0.18);"></div>
<svg style="position:absolute;left:0;top:0" width="768" height="432"><text x="456.60" y="274.10" font-family="Liberation Sans" font-size="7.3" fill="#454545" font-weight="400" text-anchor="start" textLength="73.00" lengthAdjust="spacingAndGlyphs" stroke="#454545" stroke-width="0.08" style="white-space:pre;">Series &quot;Series 2&quot; Point 1</text><text x="456.60" y="283.80" font-family="Liberation Sans" font-size="7.3" fill="#454545" font-weight="400" text-anchor="start" textLength="27.60" lengthAdjust="spacingAndGlyphs" stroke="#454545" stroke-width="0.08" style="white-space:pre;">Value: 20</text></svg>
<svg style="position:absolute;left:0;top:0" width="768" height="432"><circle cx="373.6" cy="153" r="2.7" fill="#FFFFFF" stroke="#5A5A5A" stroke-width="0.95"/><circle cx="517.7" cy="153" r="2.7" fill="#FFFFFF" stroke="#5A5A5A" stroke-width="0.95"/><circle cx="373.6" cy="239.25" r="2.7" fill="#FFFFFF" stroke="#5A5A5A" stroke-width="0.95"/><circle cx="373.6" cy="325.5" r="2.7" fill="#FFFFFF" stroke="#5A5A5A" stroke-width="0.95"/><circle cx="517.7" cy="325.5" r="2.7" fill="#FFFFFF" stroke="#5A5A5A" stroke-width="0.95"/></svg>
<div style="position:absolute;left:348.90px;top:152.50px;width:17.00px;height:16.50px;background:#FFFFFF;border:0.7px solid #D4D4D4;box-sizing:border-box;border-radius:1px;box-shadow:0.5px 0.8px 1.2px rgba(0,0,0,0.12);"></div>
<div style="position:absolute;left:348.90px;top:175.20px;width:17.00px;height:16.50px;background:#FFFFFF;border:0.7px solid #D4D4D4;box-sizing:border-box;border-radius:1px;box-shadow:0.5px 0.8px 1.2px rgba(0,0,0,0.12);"></div>
<div style="position:absolute;left:348.90px;top:198.20px;width:17.00px;height:16.50px;background:#FFFFFF;border:0.7px solid #D4D4D4;box-sizing:border-box;border-radius:1px;box-shadow:0.5px 0.8px 1.2px rgba(0,0,0,0.12);"></div>
<svg style="position:absolute;left:348.9px;top:152.5px;overflow:visible;" width="17" height="16.5" viewBox="0 0 17 16.5"><path d="M7.3 2.8 V13.6 M1.9 8.2 H12.7" stroke="#3C9A5C" stroke-width="0.8"/></svg>
<svg style="position:absolute;left:348.9px;top:175.2px;overflow:visible;" width="17" height="16.5" viewBox="0 0 17 16.5"><path d="M14.2 2.3 L7.4 9.6" stroke="#5E5E5E" stroke-width="2.2" stroke-linecap="round"/>
<path d="M14.2 2.3 L7.4 9.6" stroke="#FFFFFF" stroke-width="1.0" stroke-linecap="round"/>
<path d="M6.9 9.2 C5 9.4 4.6 11 4.2 12.2 C3.9 13 3 13.4 2.4 13.5 C4 14.3 6.6 14 7.6 12.4 C8.2 11.4 8 10 6.9 9.2 Z" fill="#3F8FE0"/></svg>
<svg style="position:absolute;left:348.9px;top:198.2px;overflow:visible;" width="17" height="16.5" viewBox="0 0 17 16.5"><path d="M1.8 1.6 H15 L10 8.2 V15 H7 V8.2 Z" fill="none" stroke="#6A6A6A" stroke-width="0.8" stroke-linejoin="round"/><path d="M1.8 1.6 H15" stroke="#9A9A9A" stroke-width="1.2"/></svg>
<svg style="position:absolute;left:586px;top:130.5px;overflow:visible;" width="9" height="240" viewBox="0 0 9 240">
<path d="M4.5 1.3 L7.2 4.7 H1.8 Z" fill="#5F5F5F"/>
<rect x="2.6" y="9.2" width="4.6" height="206.6" rx="2.3" fill="#8A8A8A"/>
<path d="M1.8 234.2 H7.2 L4.5 237.6 Z" fill="#5F5F5F"/>
</svg>
<svg style="position:absolute;left:0;top:0" width="768" height="432"><text x="604.00" y="147.70" font-family="Liberation Sans" font-size="12.6" fill="#383838" font-weight="400" text-anchor="start" textLength="102.40" lengthAdjust="spacingAndGlyphs" stroke="#383838" stroke-width="0" style="white-space:pre;">Format Data Series</text></svg>
<svg style="position:absolute;left:730px;top:140px;overflow:visible;" width="11" height="8" viewBox="0 0 11 8"><path d="M1.4 2.4 L5.6 6.6 L9.8 2.4" fill="none" stroke="#555" stroke-width="0.9"/></svg>
<svg style="position:absolute;left:751px;top:140px;overflow:visible;" width="9" height="9" viewBox="0 0 9 9"><path d="M1 1 L7.4 7.4 M7.4 1 L1 7.4" stroke="#555" stroke-width="0.9"/></svg>
<svg style="position:absolute;left:606px;top:163px;overflow:visible;" width="7" height="5" viewBox="0 0 7 5"><path d="M0.9 1 L3.4 3.6 L5.9 1" fill="none" stroke="#3D8FE0" stroke-width="0.9"/></svg>
<svg style="position:absolute;left:0;top:0" width="768" height="432"><text x="616.50" y="167.40" font-family="Liberation Sans" font-size="7.4" fill="#333333" font-weight="700" text-anchor="start" textLength="48.50" lengthAdjust="spacingAndGlyphs" stroke="#333333" stroke-width="0.08" style="white-space:pre;">Series Options</text></svg>
<div style="position:absolute;left:616.50px;top:173.40px;width:49.00px;height:1.50px;background:#3B8A4C;border-radius:0.7px;"></div>
<svg style="position:absolute;left:606px;top:183px;overflow:visible;" width="16" height="16" viewBox="0 0 16 16">
<path d="M1.6 8.4 L7 3 L12.4 8.4 L7 13.8 Z" fill="#fff" stroke="#444" stroke-width="0.8" stroke-linejoin="round"/>
<path d="M7 3 V1.4 M6 0.8 C5 0.8 5 2.6 6.6 2.8" fill="none" stroke="#444" stroke-width="0.7"/>
<path d="M12.4 8.4 C14 9.6 14.4 11.6 13.8 13.4" fill="none" stroke="#444" stroke-width="0.8"/>
<circle cx="7" cy="6.2" r="0.6" fill="#444"/>
</svg>
<svg style="position:absolute;left:629px;top:183px;overflow:visible;" width="15" height="16" viewBox="0 0 15 16">
<path d="M7.2 1.4 L13 5.6 L10.8 12.2 H3.6 L1.4 5.6 Z" fill="#fff" stroke="#444" stroke-width="0.8" stroke-linejoin="round"/>
<path d="M3.4 12.6 V14 M11 12.6 V14" stroke="#888" stroke-width="0.6"/>
</svg>
<div style="position:absolute;left:649.30px;top:181.60px;width:18.40px;height:18.80px;background:#FFFFFF;border:0.7px solid #CFCFCF;box-sizing:border-box;border-radius:2.5px;"></div>
<svg style="position:absolute;left:649.3px;top:181.6px;overflow:visible;" width="19" height="19" viewBox="0 0 19 19">
<rect x="3.6" y="6.4" width="3.6" height="9.6" fill="#1F7A3A"/>
<rect x="7.6" y="3.6" width="3.6" height="12.4" fill="#1F7A3A"/>
<rect x="11.6" y="5.2" width="3.6" height="10.8" fill="#1F7A3A"/>
</svg>
<svg style="position:absolute;left:603px;top:203px;overflow:visible;" width="158" height="8" viewBox="0 0 158 8"><path d="M0 6.2 H51 L54.4 2.6 L57.8 6.2 H158" fill="none" stroke="#D8D8D8" stroke-width="0.8"/></svg>
<svg style="position:absolute;left:606px;top:216px;overflow:visible;" width="7" height="6" viewBox="0 0 7 6"><path d="M0.9 1.2 L3.4 3.8 L5.9 1.2" fill="none" stroke="#444" stroke-width="0.9"/></svg>
<svg style="position:absolute;left:0;top:0" width="768" height="432"><text x="616.80" y="222.00" font-family="Liberation Sans" font-size="7.6" fill="#333333" font-weight="700" text-anchor="start" textLength="48.60" lengthAdjust="spacingAndGlyphs" stroke="#333333" stroke-width="0.08" style="white-space:pre;">Series Options</text></svg>
<svg style="position:absolute;left:751px;top:213px;overflow:visible;" width="10" height="168" viewBox="0 0 10 168">
<path d="M4.7 1.6 L7.4 5 H2 Z" fill="#5F5F5F"/>
<rect x="2.6" y="9" width="4.4" height="115" rx="2.2" fill="#7E7E7E"/>
<path d="M2 160 H7.4 L4.7 163.4 Z" fill="#5F5F5F"/>
</svg>
<svg style="position:absolute;left:0;top:0" width="768" height="432"><text x="616.50" y="235.60" font-family="Liberation Sans" font-size="7.5" fill="#333333" font-weight="400" text-anchor="start" textLength="34.00" lengthAdjust="spacingAndGlyphs" stroke="#333333" stroke-width="0.08" style="white-space:pre;">Gap Depth</text></svg>
<div style="position:absolute;left:622.00px;top:242.90px;width:79.30px;height:0.80px;background:#8A8A8A;border-radius:0px;"></div>
<div style="position:absolute;left:622.00px;top:242.70px;width:24.00px;height:1.20px;background:#444444;border-radius:0px;"></div>
<div style="position:absolute;left:645.40px;top:240.70px;width:1.30px;height:5.20px;background:#444444;border-radius:0px;"></div>
<div style="position:absolute;left:706.40px;top:237.50px;width:42.80px;height:12.40px;background:#FFFFFF;border:0.7px solid #CFCFCF;box-sizing:border-box;border-radius:2px;"></div>
<svg style="position:absolute;left:0;top:0" width="768" height="432"><text x="710.00" y="246.40" font-family="Liberation Sans" font-size="7" fill="#444444" font-weight="400" text-anchor="start" textLength="16.00" lengthAdjust="spacingAndGlyphs" stroke="#444444" stroke-width="0.08" style="white-space:pre;">150%</text></svg>
<svg style="position:absolute;left:740px;top:239.0px;overflow:visible;" width="6" height="10" viewBox="0 0 6 10"><path d="M1.2 3.4 L3 1.6 L4.8 3.4 M1.2 6.4 L3 8.2 L4.8 6.4" fill="none" stroke="#555" stroke-width="0.7"/></svg>
<svg style="position:absolute;left:0;top:0" width="768" height="432"><text x="616.50" y="261.30" font-family="Liberation Sans" font-size="7.5" fill="#333333" font-weight="400" text-anchor="start" textLength="34.50" lengthAdjust="spacingAndGlyphs" stroke="#333333" stroke-width="0.08" style="white-space:pre;">Gap Width</text></svg>
<div style="position:absolute;left:622.00px;top:268.60px;width:79.30px;height:0.80px;background:#8A8A8A;border-radius:0px;"></div>
<div style="position:absolute;left:622.00px;top:268.40px;width:24.00px;height:1.20px;background:#444444;border-radius:0px;"></div>
<div style="position:absolute;left:645.40px;top:266.40px;width:1.30px;height:5.20px;background:#444444;border-radius:0px;"></div>
<div style="position:absolute;left:706.40px;top:263.00px;width:42.80px;height:12.40px;background:#FFFFFF;border:0.7px solid #CFCFCF;box-sizing:border-box;border-radius:2px;"></div>
<svg style="position:absolute;left:0;top:0" width="768" height="432"><text x="710.00" y="271.90" font-family="Liberation Sans" font-size="7" fill="#444444" font-weight="400" text-anchor="start" textLength="16.00" lengthAdjust="spacingAndGlyphs" stroke="#444444" stroke-width="0.08" style="white-space:pre;">150%</text></svg>
<svg style="position:absolute;left:740px;top:264.5px;overflow:visible;" width="6" height="10" viewBox="0 0 6 10"><path d="M1.2 3.4 L3 1.6 L4.8 3.4 M1.2 6.4 L3 8.2 L4.8 6.4" fill="none" stroke="#555" stroke-width="0.7"/></svg>
<svg style="position:absolute;left:0;top:0" width="768" height="432"><text x="616.50" y="287.30" font-family="Liberation Sans" font-size="7.5" fill="#333333" font-weight="400" text-anchor="start" textLength="45.60" lengthAdjust="spacingAndGlyphs" stroke="#333333" stroke-width="0.08" style="white-space:pre;">Column shape</text></svg>
<svg style="position:absolute;left:623px;top:296px;overflow:visible;" width="18" height="20" viewBox="0 0 18 20">
<path d="M1.6 9.5 H6.6 V18.6 H1.6 Z M1.6 9.5 L2.8 8.3 H7.8 L6.6 9.5 M7.8 8.3 V17.4 L6.6 18.6" fill="none" stroke="#444" stroke-width="0.7"/>
<path d="M9.2 3.2 H14.8 V18.6 H9.2 Z M9.2 3.2 L10.6 1.8 H16.2 L14.8 3.2 M16.2 1.8 V17.2 L14.8 18.6" fill="none" stroke="#444" stroke-width="0.7"/>
</svg>
<svg style="position:absolute;left:623px;top:318px;overflow:visible;" width="18" height="18" viewBox="0 0 18 18">
<path d="M0.8 16.4 L4.8 7.4 L8.2 16.4 Z M4.8 7.4 L6.8 15.6" fill="none" stroke="#444" stroke-width="0.7"/>
<path d="M7.6 16.4 L12.6 2.4 L17 16.4 Z M12.6 2.4 L14.6 15.4" fill="none" stroke="#444" stroke-width="0.7"/>
</svg>
<svg style="position:absolute;left:623px;top:339px;overflow:visible;" width="18" height="18" viewBox="0 0 18 18">
<path d="M0.8 16.4 L3.2 12.6 H7 L9 16.4 Z M3.2 12.6 L4.6 11.2 H8 L7 12.6" fill="none" stroke="#444" stroke-width="0.7"/>
<path d="M8.4 16.4 L12.8 2.6 L17.2 16.4 Z M12.8 2.6 L14.6 15.6" fill="none" stroke="#444" stroke-width="0.7"/>
</svg>
<svg style="position:absolute;left:623px;top:359px;overflow:visible;" width="18" height="20" viewBox="0 0 18 20">
<path d="M1.4 8.6 V17.4 C1.4 18.8 6.4 18.8 6.4 17.4 V8.6" fill="none" stroke="#444" stroke-width="0.7"/>
<ellipse cx="3.9" cy="8.4" rx="2.5" ry="1.1" fill="none" stroke="#444" stroke-width="0.7"/>
<path d="M9 3.4 V17.4 C9 18.8 15 18.8 15 17.4 V3.4" fill="none" stroke="#444" stroke-width="0.7"/>
<ellipse cx="12" cy="3.2" rx="3" ry="1.2" fill="none" stroke="#444" stroke-width="0.7"/>
</svg>
<svg style="position:absolute;left:646px;top:302px;overflow:visible;" width="10" height="10" viewBox="0 0 10 10"><circle cx="4.6" cy="4.3" r="2.8" fill="#fff" stroke="#1E7B3A" stroke-width="1.6"/></svg>
<svg style="position:absolute;left:646px;top:322.7px;overflow:visible;" width="10" height="10" viewBox="0 0 10 10"><circle cx="4.6" cy="4.3" r="3.2" fill="#fff" stroke="#555" stroke-width="0.65"/></svg>
<svg style="position:absolute;left:646px;top:344.3px;overflow:visible;" width="10" height="10" viewBox="0 0 10 10"><circle cx="4.6" cy="4.3" r="3.2" fill="#fff" stroke="#555" stroke-width="0.65"/></svg>
<svg style="position:absolute;left:646px;top:365.09999999999997px;overflow:visible;" width="10" height="10" viewBox="0 0 10 10"><circle cx="4.6" cy="4.3" r="3.2" fill="#fff" stroke="#555" stroke-width="0.65"/></svg>
<svg style="position:absolute;left:0;top:0" width="768" height="432"><text x="658.40" y="309.40" font-family="Liberation Sans" font-size="7.5" fill="#333333" font-weight="400" text-anchor="start" textLength="11.80" lengthAdjust="spacingAndGlyphs" stroke="#333333" stroke-width="0.08" style="white-space:pre;">Box</text><text x="658.40" y="330.60" font-family="Liberation Sans" font-size="7.5" fill="#333333" font-weight="400" text-anchor="start" textLength="39.00" lengthAdjust="spacingAndGlyphs" stroke="#333333" stroke-width="0.08" style="white-space:pre;">Full Pyramid</text><text x="658.40" y="352.10" font-family="Liberation Sans" font-size="7.5" fill="#333333" font-weight="400" text-anchor="start" textLength="46.60" lengthAdjust="spacingAndGlyphs" stroke="#333333" stroke-width="0.08" style="white-space:pre;">Partial Pyramid</text><text x="658.40" y="373.00" font-family="Liberation Sans" font-size="7.5" fill="#333333" font-weight="400" text-anchor="start" textLength="25.60" lengthAdjust="spacingAndGlyphs" stroke="#333333" stroke-width="0.08" style="white-space:pre;">Cylinder</text><text x="7.80" y="121.40" font-family="Liberation Sans" font-size="8" fill="#424242" font-weight="400" text-anchor="start" textLength="25.60" lengthAdjust="spacingAndGlyphs" stroke="#424242" stroke-width="0.08" style="white-space:pre;">Chart 1</text></svg>
<svg style="position:absolute;left:55px;top:116px;overflow:visible;" width="8" height="5" viewBox="0 0 8 5"><path d="M1 1 L3.6 3.6 L6.2 1" fill="none" stroke="#555" stroke-width="0.8"/></svg>
<svg style="position:absolute;left:70px;top:113px;overflow:visible;" width="3" height="11" viewBox="0 0 3 11"><circle cx="1.5" cy="2.3" r="0.75" fill="#3A3A3A"/><circle cx="1.5" cy="4.8" r="0.75" fill="#3A3A3A"/><circle cx="1.5" cy="7.5" r="0.75" fill="#3A3A3A"/></svg>
<svg style="position:absolute;left:80.5px;top:113.5px;overflow:visible;" width="10" height="10" viewBox="0 0 10 10"><path d="M1.1 1.3 L8.2 8.2 M8.2 1.3 L1.1 8.2" stroke="#B0B0B0" stroke-width="0.7"/></svg>
<svg style="position:absolute;left:94px;top:113.5px;overflow:visible;" width="11" height="10" viewBox="0 0 11 10"><path d="M0.8 3.4 L4.6 7.2 L10 1.4" fill="none" stroke="#B0B0B0" stroke-width="0.7"/></svg>
<svg style="position:absolute;left:0;top:0" width="768" height="432"><text x="109.40" y="121.30" font-family="Liberation Serif" font-size="10.5" fill="#333333" font-weight="400" text-anchor="start" textLength="9.20" lengthAdjust="spacingAndGlyphs" stroke="#333333" stroke-width="0.02" style="white-space:pre;font-style:italic">fx</text></svg>
<svg style="position:absolute;left:121px;top:116.2px;overflow:visible;" width="7" height="5" viewBox="0 0 7 5"><path d="M0.5 0.8 L3.3 3.8 L6.1 0.8" fill="none" stroke="#777" stroke-width="0.75"/></svg>
<svg style="position:absolute;left:0;top:0" width="768" height="432"><text x="137.10" y="121.30" font-family="Liberation Mono" font-size="8.3" fill="#333333" font-weight="400" text-anchor="start" textLength="192.50" lengthAdjust="spacingAndGlyphs" stroke="#333333" stroke-width="0.08" style="white-space:pre;">=SERIES(Sheet1!$C$1,,Sheet1!$C$2:$C$5,1)</text></svg>
<div style="position:absolute;left:0.00px;top:370.50px;width:584.80px;height:19.50px;background:#EBEEF1;border-radius:0px;"></div>
<svg style="position:absolute;left:12px;top:374px;overflow:visible;" width="30" height="12" viewBox="0 0 30 12"><path d="M5 2.6 L2.6 5.6 L5 8.6" fill="none" stroke="#9A9A9A" stroke-width="0.8"/><path d="M22.4 2.6 L24.8 5.6 L22.4 8.6" fill="none" stroke="#9A9A9A" stroke-width="0.8"/></svg>
<div style="position:absolute;left:66.90px;top:370.50px;width:33.00px;height:16.00px;background:#FFFFFF;border-radius:0px;border-radius:0 0 3px 3px;"></div>
<svg style="position:absolute;left:0;top:0" width="768" height="432"><text x="71.30" y="382.30" font-family="Liberation Sans" font-size="8.9" fill="#242424" font-weight="400" text-anchor="start" textLength="24.40" lengthAdjust="spacingAndGlyphs" stroke="#242424" stroke-width="0.08" style="white-space:pre;">Sheet1</text></svg>
<div style="position:absolute;left:71.30px;top:384.50px;width:24.60px;height:1.30px;background:#2E7D46;border-radius:0.6px;"></div>
<svg style="position:absolute;left:127px;top:375px;overflow:visible;" width="10" height="10" viewBox="0 0 10 10"><path d="M5 1.4 V8.6 M1.4 5 H8.6" stroke="#555" stroke-width="0.8"/></svg>
<svg style="position:absolute;left:358px;top:375px;overflow:visible;" width="4" height="11" viewBox="0 0 4 11"><circle cx="2" cy="2.2" r="0.65" fill="#555"/><circle cx="2" cy="5.4" r="0.65" fill="#555"/><circle cx="2" cy="8.6" r="0.65" fill="#555"/></svg>
<div style="position:absolute;left:370.40px;top:374.20px;width:214.60px;height:11.60px;background:#F6F7F8;border-radius:5.8px;"></div>
<svg style="position:absolute;left:370.4px;top:374.2px;overflow:visible;" width="215" height="12" viewBox="0 0 215 12">
<path d="M3.4 5.8 L6.6 3.2 V8.4 Z" fill="#444"/>
<rect x="10.6" y="3.8" width="147.7" height="4" rx="2" fill="#7A7A7A"/>
<path d="M211.6 5.8 L208.4 3.2 V8.4 Z" fill="#444"/>
</svg>
<svg style="position:absolute;left:0;top:0" width="768" height="432"><text x="6.80" y="399.70" font-family="Liberation Sans" font-size="6.8" fill="#5E5E5E" font-weight="400" text-anchor="start" textLength="16.20" lengthAdjust="spacingAndGlyphs" stroke="#5E5E5E" stroke-width="0.08" style="white-space:pre;">Ready</text></svg>
<svg style="position:absolute;left:34px;top:391.5px;overflow:visible;" width="10" height="10" viewBox="0 0 10 10"><circle cx="5" cy="1.6" r="1" fill="none" stroke="#444" stroke-width="0.6"/>
<path d="M1 3.4 H9 M5 3.4 V6 L2.4 9.2 M5 6 L7.6 9.2 M1.6 6.2 L3 7.6 M8.4 6.2 L7 7.6" fill="none" stroke="#444" stroke-width="0.6"/></svg>
<svg style="position:absolute;left:0;top:0" width="768" height="432"><text x="46.00" y="399.70" font-family="Liberation Sans" font-size="6.9" fill="#333333" font-weight="700" text-anchor="start" textLength="74.50" lengthAdjust="spacingAndGlyphs" stroke="#333333" stroke-width="0.08" style="white-space:pre;">Accessibility: Investigate</text><text x="471.50" y="399.70" font-family="Liberation Sans" font-size="6.8" fill="#5E5E5E" font-weight="400" text-anchor="start" textLength="37.50" lengthAdjust="spacingAndGlyphs" stroke="#5E5E5E" stroke-width="0.08" style="white-space:pre;">Average: 32.5</text><text x="517.50" y="399.70" font-family="Liberation Sans" font-size="6.8" fill="#5E5E5E" font-weight="400" text-anchor="start" textLength="26.50" lengthAdjust="spacingAndGlyphs" stroke="#5E5E5E" stroke-width="0.08" style="white-space:pre;">Count: 10</text><text x="553.00" y="399.70" font-family="Liberation Sans" font-size="6.8" fill="#5E5E5E" font-weight="400" text-anchor="start" textLength="26.50" lengthAdjust="spacingAndGlyphs" stroke="#5E5E5E" stroke-width="0.08" style="white-space:pre;">Sum: 260</text></svg>
<div style="position:absolute;left:589.80px;top:390.30px;width:23.60px;height:12.50px;background:#E3E3E3;border-radius:0px;"></div>
<svg style="position:absolute;left:596px;top:391.5px;overflow:visible;" width="12" height="10" viewBox="0 0 12 10"><rect x="1" y="1" width="9" height="7.6" fill="none" stroke="#444" stroke-width="0.7"/><path d="M1 3.5 H10 M1 6 H10 M4 1 V8.6 M7 1 V8.6" stroke="#444" stroke-width="0.6"/></svg>
<svg style="position:absolute;left:620px;top:391.5px;overflow:visible;" width="12" height="10" viewBox="0 0 12 10"><rect x="1.2" y="1" width="8.6" height="7.6" fill="none" stroke="#444" stroke-width="0.7"/><rect x="3" y="2.6" width="5" height="4.4" fill="#AAA" stroke="#444" stroke-width="0.5"/></svg>
<svg style="position:absolute;left:644px;top:391.5px;overflow:visible;" width="12" height="10" viewBox="0 0 12 10"><path d="M1.2 1 H9.8 V8.6 H1.2 Z M4.2 1 V5 H7 V1" fill="none" stroke="#444" stroke-width="0.7"/></svg>
<div style="position:absolute;left:666.00px;top:396.20px;width:3.00px;height:0.70px;background:#888;border-radius:0px;"></div>
<div style="position:absolute;left:672.80px;top:396.10px;width:57.60px;height:0.80px;background:#8A8A8A;border-radius:0px;"></div>
<div style="position:absolute;left:701.00px;top:393.20px;width:2.40px;height:6.40px;background:#444;border-radius:0.6px;"></div>
<svg style="position:absolute;left:733px;top:392.5px;overflow:visible;" width="8" height="8" viewBox="0 0 8 8"><path d="M4 1 V7 M1 4 H7" stroke="#888" stroke-width="0.7"/></svg>
<svg style="position:absolute;left:0;top:0" width="768" height="432"><text x="747.50" y="399.70" font-family="Liberation Sans" font-size="6.8" fill="#5E5E5E" font-weight="400" text-anchor="start" textLength="15.50" lengthAdjust="spacingAndGlyphs" stroke="#5E5E5E" stroke-width="0.08" style="white-space:pre;">100%</text></svg>
<div style="position:absolute;left:0.00px;top:403.00px;width:768.00px;height:0.60px;background:#D0D8DE;border-radius:0px;"></div>
<svg style="position:absolute;left:10px;top:408px;overflow:visible;" width="22" height="20" viewBox="0 0 22 20">
<circle cx="9" cy="10.8" r="5.6" fill="#F6B73C"/>
<path d="M5.6 9.6 H12 M5 11.6 H12.6 M6 13.4 H11" stroke="#FFE9A8" stroke-width="0.7"/>
<circle cx="11.2" cy="13.6" r="1.8" fill="#F07F2E"/>
<circle cx="13.5" cy="4.6" r="3.5" fill="#D13438"/>
</svg>
<svg style="position:absolute;left:0;top:0" width="768" height="432"><text x="23.50" y="414.40" font-family="Liberation Sans" font-size="5.2" fill="#FFFFFF" font-weight="700" text-anchor="middle" stroke="#FFFFFF" stroke-width="0.08" style="white-space:pre;">1</text></svg>
<svg style="position:absolute;left:150.5px;top:411.4px;overflow:visible;" width="14" height="14" viewBox="0 0 14 14">
<rect x="0" y="0" width="6.6" height="6.6" rx="0.4" fill="#2B8FE0"/>
<rect x="7.2" y="0" width="6.6" height="6.6" rx="0.4" fill="#42A8EE"/>
<rect x="0" y="7.2" width="6.6" height="6.6" rx="0.4" fill="#1C7BD0"/>
<rect x="7.2" y="7.2" width="6.6" height="6.6" rx="0.4" fill="#2F93E4"/>
</svg>
<div style="position:absolute;left:174.00px;top:408.80px;width:129.80px;height:17.80px;background:#F7F9FA;border:0.6px solid #E0E4E8;box-sizing:border-box;border-radius:9px;"></div>
<div style="position:absolute;left:271.70px;top:409.60px;width:31.60px;height:16.20px;background:#E8ECEF;border-radius:8px;"></div>
<svg style="position:absolute;left:181px;top:412px;overflow:visible;" width="10" height="11" viewBox="0 0 10 11"><circle cx="4.4" cy="4.4" r="3.2" fill="none" stroke="#222" stroke-width="1"/><path d="M6.6 6.8 L9 9.4" stroke="#222" stroke-width="1.1"/></svg>
<svg style="position:absolute;left:0;top:0" width="768" height="432"><text x="195.00" y="420.40" font-family="Liberation Sans" font-size="7.6" fill="#5A5A5A" font-weight="400" text-anchor="start" textLength="24.00" lengthAdjust="spacingAndGlyphs" stroke="#5A5A5A" stroke-width="0.08" style="white-space:pre;">Search</text></svg>
<svg style="position:absolute;left:280.5px;top:412.8px;overflow:visible;" width="14" height="11" viewBox="0 0 14 11">
<path d="M5 2.2 V1 H9 V2.2" fill="none" stroke="#8A4A10" stroke-width="0.8"/>
<rect x="0.4" y="2.2" width="13.2" height="8.4" rx="1.2" fill="#D88A1C"/>
<rect x="0.4" y="2.2" width="13.2" height="3.6" rx="1" fill="#E9A23B"/>
<rect x="6.2" y="5" width="1.6" height="1.6" fill="#FFD36B"/>
</svg>
<svg style="position:absolute;left:311px;top:410.4px;overflow:visible;" width="16" height="15" viewBox="0 0 16 15">
<rect x="4.4" y="0.6" width="10.6" height="10" rx="0.8" fill="#F2F2F2"/>
<rect x="2.6" y="2.4" width="10.6" height="10" rx="0.8" fill="#C8C8C8"/>
<path d="M0.6 5 H6 V8.8 H10.8 V13.8 H0.6 Z" fill="#1E1E1E"/>
</svg>
<svg style="position:absolute;left:337.5px;top:410.5px;overflow:visible;" width="16" height="14" viewBox="0 0 16 14">
<path d="M0.4 1.4 H5.6 L7 3 H15.4 V13.4 H0.4 Z" fill="#F2B51C"/>
<rect x="0.4" y="3.6" width="15" height="9.8" fill="#FFCE3D"/>
<rect x="3.2" y="9" width="9.4" height="4" rx="1" fill="#1A74C9"/>
</svg>
<svg style="position:absolute;left:366.3px;top:410px;overflow:visible;" width="12" height="15" viewBox="0 0 12 15">
<rect x="0.4" y="0.4" width="11" height="14.2" rx="1.2" fill="#5F6B76"/>
<rect x="1.8" y="1.6" width="8.2" height="2.8" fill="#6FC3F0"/>
<g fill="#D9E1E6"><rect x="1.8" y="5.6" width="2.2" height="1.8"/><rect x="4.8" y="5.6" width="2.2" height="1.8"/><rect x="1.8" y="8.4" width="2.2" height="1.8"/><rect x="4.8" y="8.4" width="2.2" height="1.8"/><rect x="1.8" y="11.2" width="2.2" height="1.8"/><rect x="4.8" y="11.2" width="2.2" height="1.8"/></g>
<rect x="7.8" y="5.6" width="2.2" height="7.4" fill="#2A7FC0"/>
</svg>
<svg style="position:absolute;left:392px;top:410.2px;overflow:visible;" width="14" height="15" viewBox="0 0 14 15">
<path d="M1 2 H8.6 V8.6 H1 Z" fill="none" stroke="#E0503C" stroke-width="1.2" stroke-dasharray="1.6 1"/>
<path d="M6 7 L12 12.8 M12 7 L7.6 11.4" stroke="#2F7CD6" stroke-width="0.9"/>
<circle cx="7" cy="12.6" r="1.4" fill="none" stroke="#2F7CD6" stroke-width="0.9"/>
<circle cx="12.6" cy="8" r="1.2" fill="none" stroke="#2F7CD6" stroke-width="0.9"/>
</svg>
<svg style="position:absolute;left:417px;top:412px;overflow:visible;" width="16" height="12" viewBox="0 0 16 12">
<rect x="0.3" y="2" width="15.4" height="9.8" rx="1.6" fill="#5E6A74"/>
<rect x="4.6" y="0.4" width="6.4" height="2.4" rx="0.8" fill="#5E6A74"/>
<circle cx="8" cy="6.9" r="3.4" fill="#CFD8E0"/>
<circle cx="8" cy="6.9" r="2.2" fill="#8C7FE6"/>
</svg>
<svg style="position:absolute;left:444px;top:410.6px;overflow:visible;" width="14" height="14" viewBox="0 0 14 14">
<circle cx="7" cy="7" r="7" fill="#1ED760"/>
<path d="M3.4 5 C5.6 4.2 8.6 4.4 10.8 5.6 M3.8 7.2 C5.8 6.6 8.2 6.8 10 7.8 M4.2 9.2 C5.8 8.8 7.6 9 9.2 9.8" fill="none" stroke="#111" stroke-width="0.95" stroke-linecap="round"/>
</svg>
<svg style="position:absolute;left:473px;top:410px;overflow:visible;" width="10" height="17" viewBox="0 0 10 17">
<rect x="1.6" y="0.6" width="6.8" height="9.6" rx="2.6" fill="#9AA1A8"/>
<rect x="3" y="5" width="4" height="2.4" fill="#E86A2E"/>
<path d="M1 8.6 C1 12 9 12 9 8.6 M5 11.6 V14.6 M2.6 15 H7.4" fill="none" stroke="#6E767D" stroke-width="0.8"/>
</svg>
<svg style="position:absolute;left:496px;top:407.5px;overflow:visible;" width="20" height="20" viewBox="0 0 20 20">
<circle cx="7.6" cy="10.2" r="7" fill="#E33B2E"/>
<path d="M7.6 10.2 L1.6 6.7 A7 7 0 0 0 4.1 16.3 Z" fill="#2DA94F"/>
<path d="M7.6 10.2 L4.1 16.3 A7 7 0 0 0 14.6 10.2 Z" fill="#FCC934"/>
<circle cx="7.6" cy="10.2" r="3.2" fill="#fff"/>
<circle cx="7.6" cy="10.2" r="2.4" fill="#1A73E8"/>
<circle cx="13.8" cy="4.9" r="4.6" fill="#7B3FD0"/>
</svg>
<svg style="position:absolute;left:0;top:0" width="768" height="432"><text x="509.80" y="414.40" font-family="Liberation Sans" font-size="5.2" fill="#FFFFFF" font-weight="400" text-anchor="middle" stroke="#FFFFFF" stroke-width="0.08" style="white-space:pre;">D</text></svg>
<div style="position:absolute;left:501.50px;top:426.60px;width:2.60px;height:1.20px;background:#8A9096;border-radius:0.6px;"></div>
<div style="position:absolute;left:519.20px;top:406.80px;width:21.80px;height:22.90px;background:#EEF3F7;border-radius:3px;box-shadow:0 0 0 0.5px #D5DDE3;"></div>
<svg style="position:absolute;left:523.3px;top:410.6px;overflow:visible;" width="14" height="14" viewBox="0 0 14 14">
<rect x="3.8" y="0.4" width="10" height="13.2" rx="1.2" fill="#21A366"/>
<rect x="3.8" y="4.8" width="10" height="4.4" fill="#107C41"/>
<rect x="3.8" y="9.2" width="10" height="4.4" fill="#185C37"/>
<rect x="0.2" y="2.8" width="7.6" height="8.4" rx="0.8" fill="#107C41"/>
<path d="M2.2 4.8 L5.8 9.2 M5.8 4.8 L2.2 9.2" stroke="#fff" stroke-width="1.1"/>
</svg>
<div style="position:absolute;left:526.50px;top:427.60px;width:8.30px;height:1.40px;background:#3F7FA8;border-radius:0.7px;"></div>
<svg style="position:absolute;left:583px;top:414px;overflow:visible;" width="9" height="7" viewBox="0 0 9 7"><path d="M1 5.2 L4.4 1.8 L7.8 5.2" fill="none" stroke="#333" stroke-width="0.9"/></svg>
<svg style="position:absolute;left:601px;top:411px;overflow:visible;" width="14" height="13" viewBox="0 0 14 13">
<path d="M2 9.4 C0.4 9.4 0.4 6 2.4 6 C2.8 3 7.6 2.6 8.6 5.4 C11 5 11.6 8.2 9.8 9.4 Z" fill="#BFC6CC" stroke="#5E666D" stroke-width="0.7"/>
<rect x="7.6" y="7.6" width="4.6" height="4.4" rx="0.6" fill="#fff" stroke="#2F7CD6" stroke-width="0.7"/>
</svg>
<svg style="position:absolute;left:618.5px;top:412px;overflow:visible;" width="15" height="10" viewBox="0 0 15 10"><path d="M3 8.6 C0.4 8.6 0.2 4.8 3 4.6 C3.6 1.4 8.4 0.6 10 3.6 C13.4 3.2 14.4 8.4 11 8.6 Z" fill="#1A86D8"/></svg>
<svg style="position:absolute;left:639.5px;top:411.5px;overflow:visible;" width="12" height="10" viewBox="0 0 12 10">
<path d="M1 4 C4 1.2 8 1.2 11 4" fill="none" stroke="#C4C9CD" stroke-width="0.9"/>
<path d="M2.8 5.8 C4.8 4.2 7.2 4.2 9.2 5.8" fill="none" stroke="#9AA0A5" stroke-width="0.9"/>
<path d="M4.6 7.6 C5.4 7 6.6 7 7.4 7.6" fill="none" stroke="#555" stroke-width="0.9"/>
<circle cx="6" cy="8.9" r="0.7" fill="#333"/>
</svg>
<svg style="position:absolute;left:653.5px;top:411.5px;overflow:visible;" width="13" height="11" viewBox="0 0 13 11">
<path d="M1 3.6 H3 L6 1 V10 L3 7.4 H1 Z" fill="none" stroke="#333" stroke-width="0.8" stroke-linejoin="round"/>
<path d="M8 3.6 C9 4.6 9 6.4 8 7.4 M9.8 2.2 C11.6 3.8 11.6 7.2 9.8 8.8" fill="none" stroke="#333" stroke-width="0.8"/>
</svg>
<svg style="position:absolute;left:667px;top:413px;overflow:visible;" width="14" height="9" viewBox="0 0 14 9">
<rect x="0.6" y="0.8" width="10.8" height="6.8" rx="1.2" fill="none" stroke="#333" stroke-width="0.8"/>
<rect x="2" y="2.2" width="5" height="4" fill="#222"/>
<rect x="11.8" y="2.8" width="1.2" height="2.8" fill="#333"/>
</svg>
<svg style="position:absolute;left:0;top:0" width="768" height="432"><text x="718.50" y="415.20" font-family="Liberation Sans" font-size="7.4" fill="#1F1F1F" font-weight="400" text-anchor="end" textLength="25.50" lengthAdjust="spacingAndGlyphs" stroke="#1F1F1F" stroke-width="0.08" style="white-space:pre;">2:36 PM</text><text x="718.50" y="425.00" font-family="Liberation Sans" font-size="7.4" fill="#1F1F1F" font-weight="400" text-anchor="end" textLength="26.50" lengthAdjust="spacingAndGlyphs" stroke="#1F1F1F" stroke-width="0.08" style="white-space:pre;">9/1/2024</text></svg>
<svg style="position:absolute;left:722px;top:411px;overflow:visible;" width="11" height="13" viewBox="0 0 11 13">
<path d="M5.5 1 C3 1 2.2 3 2.2 5 V8.2 L1 10 H10 L8.8 8.2 V5 C8.8 3 8 1 5.5 1 Z" fill="#2F3A44"/>
<path d="M4.2 11 C4.4 12.2 6.6 12.2 6.8 11" fill="#2F3A44" stroke="#2F3A44" stroke-width="0.6"/>
</svg>
<svg style="position:absolute;left:741px;top:409px;overflow:visible;" width="18" height="18" viewBox="0 0 18 18">
<path d="M3 4 C5 0.5 11 0.5 13 4 L15 12 C13 16 6 16 3 13 C1 10 1.5 6 3 4 Z" fill="#3AA0F0"/>
<path d="M8 1.5 C12 1 15 4 15 8 L10 9 Z" fill="#E8509C"/>
<path d="M3 10 L9 8 L11 15 C7 16 4 14 3 10 Z" fill="#5BD08A"/>
<rect x="8" y="9" width="9" height="7" rx="1.4" fill="#6C3DD1"/>
</svg>
<svg style="position:absolute;left:0;top:0" width="768" height="432"><text x="753.50" y="423.60" font-family="Liberation Sans" font-size="3.6" fill="#FFFFFF" font-weight="700" text-anchor="middle" stroke="#FFFFFF" stroke-width="0.08" style="white-space:pre;">PBI</text></svg>
<svg style="position:absolute;left:753px;top:115px;overflow:visible;" width="8" height="6" viewBox="0 0 8 6"><path d="M1 1.2 L4 4.2 L7 1.2" fill="none" stroke="#444" stroke-width="0.9"/></svg>
</body></html>
